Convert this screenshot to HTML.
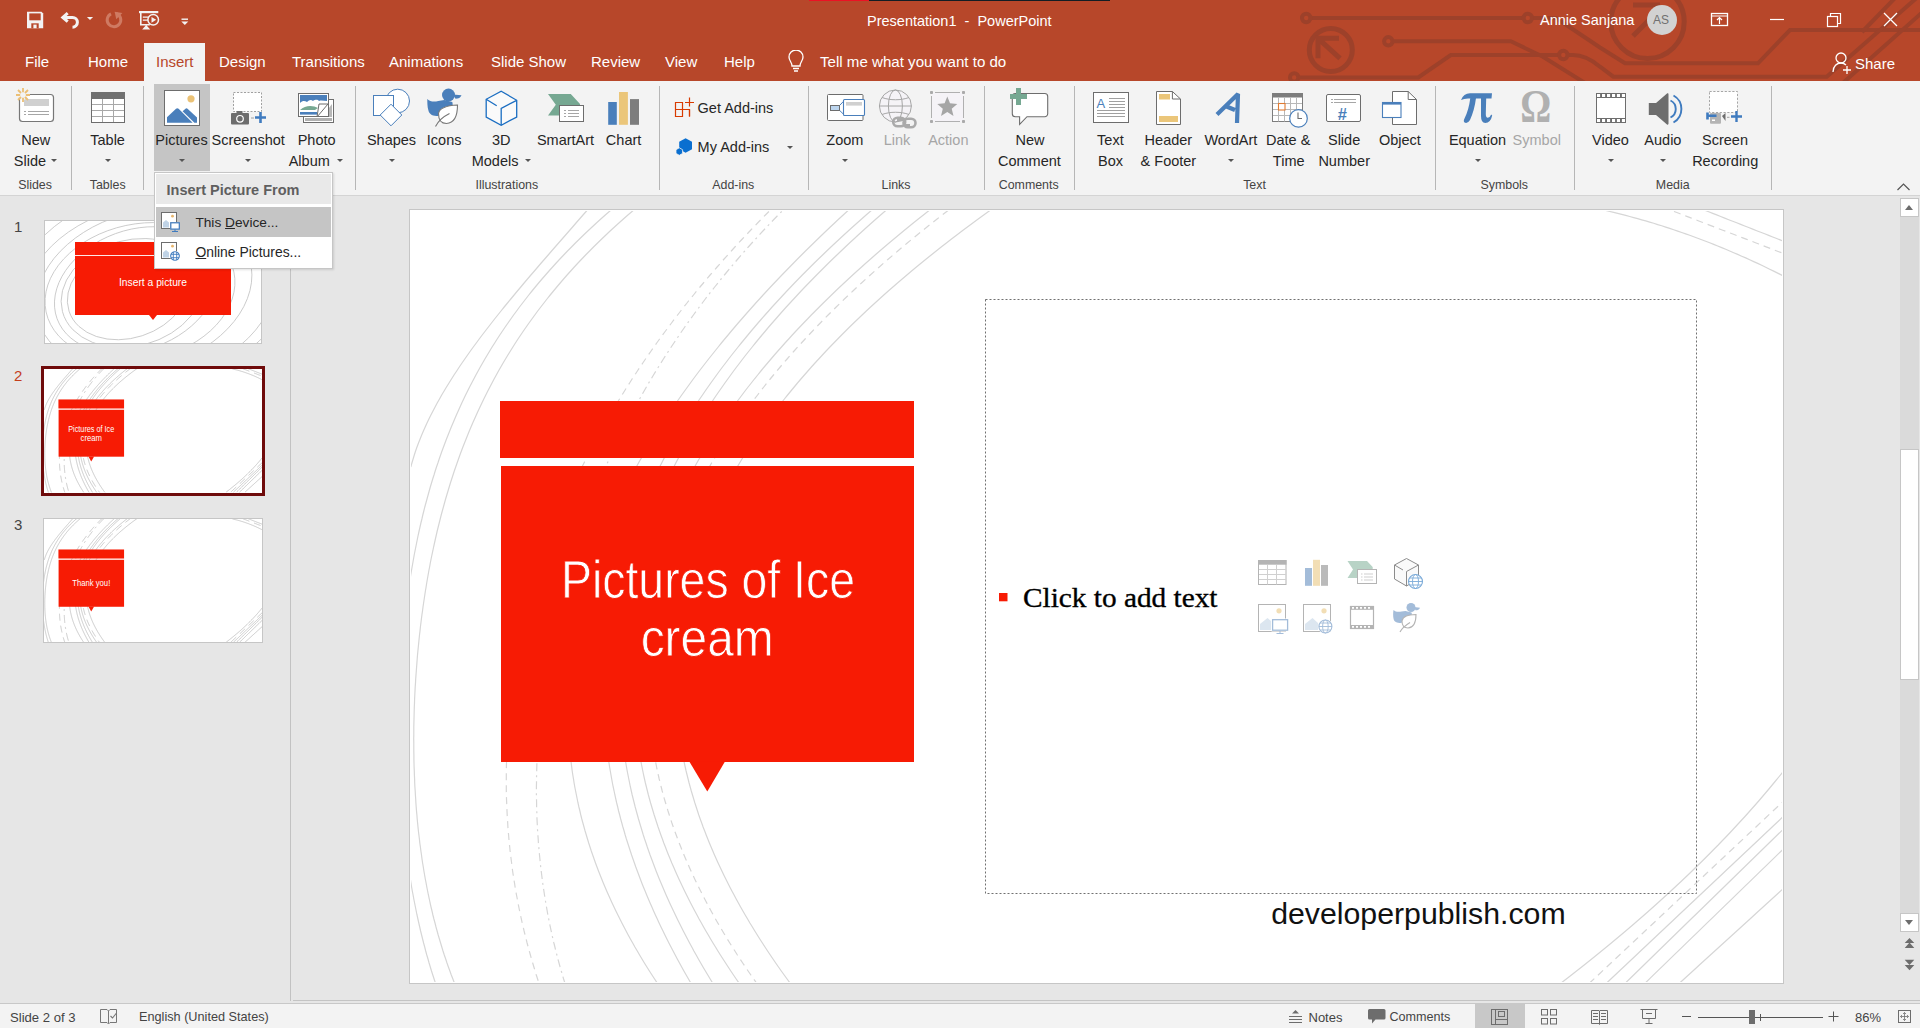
<!DOCTYPE html>
<html><head><meta charset="utf-8"><title>PowerPoint</title>
<style>
*{margin:0;padding:0;box-sizing:border-box}
html,body{width:1920px;height:1028px;overflow:hidden;background:#e6e6e6;font-family:"Liberation Sans",sans-serif}
.a{position:absolute}
.t{position:absolute;white-space:nowrap;line-height:1}
#title{left:0;top:0;width:1920px;height:81px;background:#b7472a}
.tab{color:#fff;font-size:15px;top:54px}
#ribbon{left:0;top:81px;width:1920px;height:114px;background:#f3f3f3}
.rl{font-size:14.5px;color:#262626;text-align:center}
.gl{font-size:12.4px;color:#444;top:179px}
.sep{position:absolute;top:86px;width:1px;height:104px;background:#b6b6b6}
.dd{position:absolute;width:0;height:0;border-left:3.5px solid transparent;border-right:3.5px solid transparent;border-top:3.8px solid #555;margin-left:0.5px}
</style></head><body>
<!-- TITLE BAR -->
<div id="title" class="a">
<svg class="a" style="left:0;top:0" width="1920" height="81" viewBox="0 0 1920 81">
<g fill="none" stroke="#9d412a" stroke-width="4">
<path d="M1310 18H1524M1532 18H1556L1600 47.5L1625 63.3H1758L1790 30H1920"/>
<circle cx="1306.2" cy="18" r="4.2"/><circle cx="1527.8" cy="18" r="4.2"/>
<circle cx="1330.8" cy="50" r="21.5" stroke-width="5"/>
<path d="M1339 38.3H1318V58.3M1318 38.3L1340 58.3" stroke-width="5"/>
<circle cx="1388.3" cy="41.3" r="4.2"/>
<path d="M1392.5 41.3H1510.8L1543 56.7L1585 83"/>
<circle cx="1294.2" cy="77.5" r="4.2"/>
<path d="M1298.4 77.5H1418.3L1450.8 55H1559.1M1567.5 55H1573Q1586 55 1600 66.7L1613.3 76.7H1826.7L1920 -5"/>
<circle cx="1563.3" cy="55" r="4.2"/>
<circle cx="1647.5" cy="21.7" r="36.7" stroke-width="5"/>
<path d="M1633 5H1660M1633 36L1660 9" stroke-width="5"/>
<path d="M1841.7 84L1925 10M1862 32L1897 -4"/>
</g>
</svg>
<!-- QAT -->
<svg class="a" style="left:0;top:0" width="200" height="40" viewBox="0 0 200 40">
<path d="M27 11.7h14.5l1.7 1.7v14.8h-16.2z" fill="#f3f3f3"/>
<rect x="29.3" y="13.4" width="11.4" height="6.9" fill="#b7472a"/>
<rect x="31.3" y="23.3" width="7.4" height="4.9" fill="#b7472a"/>
<rect x="33.4" y="24.6" width="3.2" height="3.6" fill="#f3f3f3"/>
<path d="M62.5 17.4H72.5A4.9 4.9 0 0 1 72.5 27.2" fill="none" stroke="#f3f3f3" stroke-width="3"/>
<path d="M67.7 13.2L62.8 17.4L67.7 21.7" fill="none" stroke="#f3f3f3" stroke-width="3" stroke-linejoin="miter"/>
<path d="M86.9 17.1h6.2l-3.1 2.9z" fill="#f3f3f3"/>
<path d="M111 13.8A6.8 6.8 0 1 0 116.5 13.6" fill="none" stroke="#cf7a62" stroke-width="3"/>
<path d="M114.6 11.8L122.4 13L116.3 19.2Z" fill="#cf7a62"/>
<rect x="139" y="11" width="19.3" height="2.2" fill="#f3f3f3"/>
<path d="M140.8 13v11.8h9" fill="none" stroke="#f3f3f3" stroke-width="1.6"/>
<path d="M142.8 17.2h6.5M142.8 20.2h5.5" stroke="#f3f3f3" stroke-width="1.3"/>
<circle cx="153.2" cy="19.8" r="5.3" fill="#b7472a" stroke="#f3f3f3" stroke-width="1.5"/>
<path d="M151.5 16.9L156.2 19.8L151.5 22.7Z" fill="#f3f3f3"/>
<path d="M146.2 25v1.5M143.5 29L146.2 26L148.9 29Z" stroke="#f3f3f3" fill="#f3f3f3" stroke-width="1.2"/>
<rect x="181.5" y="18.5" width="6.5" height="1.4" fill="#f3f3f3"/><path d="M181.3 21.5h7l-3.5 3.6z" fill="#f3f3f3"/>
</svg>
<div class="t" style="left:867px;top:13.5px;font-size:14.5px;color:#fff">Presentation1&nbsp; -&nbsp; PowerPoint</div>
<div class="a" style="left:809px;top:0;width:60px;height:1px;background:#ec1124"></div>
<div class="a" style="left:869px;top:0;width:241px;height:1px;background:#121d24"></div>
<div class="t" style="left:1540px;top:12.5px;font-size:14.5px;color:#fff">Annie Sanjana</div>
<div class="a" style="left:1647px;top:5px;width:30px;height:30px;border-radius:50%;background:#d2d2d2"></div>
<div class="t" style="left:1653px;top:14px;font-size:12px;color:#707070">AS</div>
<svg class="a" style="left:1700px;top:5px" width="220" height="30" viewBox="0 0 220 30">
<rect x="11.5" y="8.5" width="16" height="12" fill="none" stroke="#fff" stroke-width="1.3"/>
<path d="M11.5 11 h16" stroke="#fff" stroke-width="1"/><path d="M19.5 19 v-6 M17 15 l2.5 -2.5 l2.5 2.5" stroke="#fff" fill="none" stroke-width="1.2"/>
<path d="M70 14.5 h14" stroke="#fff" stroke-width="1.2"/>
<rect x="127.5" y="11.5" width="10" height="10" fill="none" stroke="#fff" stroke-width="1.2"/>
<path d="M130.5 11.5 v-3 h10 v10 h-3" fill="none" stroke="#fff" stroke-width="1.2"/>
<path d="M184 8 L197 21 M197 8 L184 21" stroke="#fff" stroke-width="1.3"/>
</svg>
<div class="t tab" style="left:25px">File</div>
<div class="t tab" style="left:88px">Home</div>
<div class="a" style="left:144px;top:43px;width:61px;height:38px;background:#f3f3f3"></div>
<div class="t tab" style="left:156px;color:#b7472a">Insert</div>
<div class="t tab" style="left:219px">Design</div>
<div class="t tab" style="left:292px">Transitions</div>
<div class="t tab" style="left:389px">Animations</div>
<div class="t tab" style="left:491px">Slide Show</div>
<div class="t tab" style="left:591px">Review</div>
<div class="t tab" style="left:665px">View</div>
<div class="t tab" style="left:724px">Help</div>
<svg class="a" style="left:786px;top:50px" width="20" height="24" viewBox="0 0 20 24">
<path d="M6 16 C6 12 3 11 3 7 A7 7 0 0 1 17 7 C17 11 14 12 14 16 Z" fill="none" stroke="#fff" stroke-width="1.3"/>
<path d="M7 18.5 h6 M8 21 h4" stroke="#fff" stroke-width="1.3"/>
</svg>
<div class="t tab" style="left:820px;font-size:15.1px;top:53.5px">Tell me what you want to do</div>
<svg class="a" style="left:1830px;top:51px" width="24" height="24" viewBox="0 0 24 24">
<circle cx="11" cy="7" r="5" fill="none" stroke="#fff" stroke-width="1.3"/>
<path d="M3 21 C3 15 7 12 11 12 C13 12 15 13 16 14" fill="none" stroke="#fff" stroke-width="1.3"/>
<path d="M17 15 v8 M13 19 h8" stroke="#fff" stroke-width="1.3"/>
</svg>
<div class="t tab" style="left:1855px;top:56px">Share</div>
</div>
<!-- RIBBON -->
<div id="ribbon" class="a"></div>
<!--RIBBON_START-->
<div class="a" style="left:154px;top:84px;width:56px;height:87px;background:#c5c5c5"></div>
<svg class="a" style="left:0;top:81px" width="1920" height="114" viewBox="0 81 1920 114">
<!-- New Slide -->
<rect x="19.5" y="94.5" width="34" height="27" rx="3" fill="#fff" stroke="#777" stroke-width="1.2"/>
<rect x="24" y="99" width="25" height="7" fill="#d0d0d0"/>
<path d="M24 111.5h2M28 111.5h21M24 114.5h2M28 114.5h21" stroke="#a6a6a6" stroke-width="1"/>
<circle cx="23" cy="95" r="5" fill="#f3f3f3"/>
<g stroke="#ebbf75" stroke-width="1.8"><path d="M23 88v4.2M23 97.8v4.2M16 95h4.2M25.8 95h4.2M18 90l3 3M25 97l3 3M28 90l-3 3M21 97l-3 3"/></g>
<!-- Table -->
<rect x="91.5" y="92.5" width="33" height="30" fill="#fff" stroke="#6d6d6d" stroke-width="1"/>
<rect x="91" y="92" width="34" height="7" fill="#707070"/>
<path d="M102.5 99v23M113.5 99v23M92 104.5h32M92 110.5h32M92 116.5h32" stroke="#a8a8a8" stroke-width="1"/>
<!-- Pictures -->
<rect x="164.5" y="90.5" width="35" height="35" fill="#fff" stroke="#6d6d6d" stroke-width="1"/>
<circle cx="191" cy="98.8" r="3.6" fill="#ebc276"/>
<path d="M167 122.8V117.2L176 108.8Q177.3 107.6 178.6 108.8L192.6 122.8Z" fill="#4a7fbb"/>
<path d="M182.6 111.2L185.2 108.9Q186.5 107.8 187.8 108.9L197 117.6V122.8H194.4Z" fill="#4a7fbb"/>
<!-- Screenshot -->
<rect x="233.5" y="92.5" width="28" height="19" fill="#fff" stroke="#a0a0a0" stroke-width="1" stroke-dasharray="2 1.5"/>
<rect x="231" y="113" width="18" height="11.6" rx="1" fill="#6d6d6d"/>
<rect x="236.5" y="111" width="6" height="3" fill="#6d6d6d"/>
<circle cx="240" cy="118.8" r="3.3" fill="none" stroke="#fff" stroke-width="1.2"/>
<path d="M251 118h3" stroke="#a0a0a0"/>
<path d="M260.5 112v11M255 117.5h11" stroke="#3f7bbf" stroke-width="2.6"/>
<!-- Photo Album -->
<rect x="303.5" y="99.5" width="30" height="23" fill="#fff" stroke="#6d6d6d"/>
<rect x="305" y="118" width="27" height="3" fill="#b0b0b0"/>
<path d="M322 117L332 104V117Z" fill="#b8b8b8"/>
<rect x="298.5" y="93.5" width="30" height="23" fill="#fff" stroke="#6d6d6d"/>
<rect x="300" y="95" width="27" height="9" fill="#4a7fbb"/>
<path d="M300 103c3-3 5-2 7-1c2-2 4-3 6-1c3-2 5-1 6 0c2-1 5 0 8 0v6H300Z" fill="#fff"/>
<path d="M300 110c5-5 13-5 18-2l-3 2H300Z" fill="#76a892"/>
<rect x="300" y="112" width="17" height="2.6" fill="#4a7fbb"/>
<path d="M317 117L328 104H319Z" fill="#fff" stroke="#6d6d6d" stroke-width="1"/>
<!-- Shapes -->
<circle cx="397.7" cy="101" r="11.8" fill="#fff" stroke="#4a7fbb" stroke-width="1"/>
<rect x="373.5" y="95.5" width="20" height="20" fill="#fff" stroke="#4a7fbb" stroke-width="1"/>
<path d="M391 104.2L401.8 115L391 125.8L380.2 115Z" fill="#fff" stroke="#4a7fbb" stroke-width="1"/>
<!-- Icons -->
<circle cx="448.5" cy="95" r="6.5" fill="#4a7fbb"/>
<path d="M453 94.5l8.5 0.8c-1 2.5-3 3.5-6 3.5Z" fill="#4a7fbb"/>
<path d="M427.3 99c3 3 7 3 11 2l6-1l8 2c1 3 0 6-2 8l-12 6c-5 0-9-1-10-6c-1-3-1-8-1-11Z" fill="#4a7fbb"/>
<path d="M438.5 113.5c1-6 8-8 19-8.5c0 10-3 18-11 18.5c-4 0-8-2-8-10Z" fill="#fff" stroke="#777" stroke-width="1.1"/>
<path d="M435.5 126.5c3-6 8-10 14-13" fill="none" stroke="#777" stroke-width="1.1"/>
<!-- 3D Models -->
<path d="M501.2 91.2L516.7 100.3V117L501.2 125.2L486.2 117V99.3Z" fill="#fafafa" stroke="#1b6ec2" stroke-width="1.3"/>
<path d="M516.7 100.3L501.2 108.3V125.2M486.2 99.3L496.7 105.8" fill="none" stroke="#1b6ec2" stroke-width="1.3"/>
<!-- SmartArt -->
<path d="M548 94.1H570.8L580 104V115.6H558L548 115.6L555.8 104.8Z" fill="#76a892"/>
<rect x="559.5" y="105.5" width="24" height="16" fill="#fff" stroke="#6d6d6d" stroke-width="1"/>
<path d="M564 110.5h2M568 110.5h11M564 113.5h2M568 113.5h11M564 116.5h2M568 116.5h11" stroke="#a6a6a6" stroke-width="1"/>
<!-- Chart -->
<rect x="608.2" y="102" width="8.6" height="22.8" fill="#4a7fbb"/>
<rect x="619" y="92" width="8.9" height="32.8" fill="#ebc67a"/>
<rect x="630" y="99.1" width="9" height="25.7" fill="#7d7d7d"/>
<!-- Get Add-ins -->
<path d="M675.5 102.5H682.5V116.5H675.5ZM675.5 109.5H689.5V116.5M682.5 109.5V116.5" fill="none" stroke="#d83b01" stroke-width="1.2"/>
<path d="M689.5 109.5V116.5" stroke="#d83b01" stroke-width="1.2"/>
<path d="M689.5 97.5V106.5M685 102.5H694" stroke="#d83b01" stroke-width="1.2"/>
<!-- My Add-ins -->
<path d="M685.6 138.2L692 141.8V149.2L685.6 152.8L679.2 149.2V141.8Z" fill="#0a6fd0"/>
<path d="M679.3 147.8L682.6 149.7V153.4L679.3 155.3L676 153.4V149.7Z" fill="#0a6fd0" stroke="#f3f3f3" stroke-width="0.8"/>
<!-- Zoom -->
<rect x="827.5" y="94.5" width="35.5" height="26" rx="1" fill="#fff" stroke="#6d6d6d"/>
<rect x="830.5" y="105.5" width="9" height="5" fill="#bcd5ee" stroke="#6d6d6d"/>
<path d="M839.8 105.3L843.3 101.5M839.8 110.6L843.3 114" stroke="#4a7fbb"/>
<rect x="843.5" y="99.5" width="21" height="16" rx="1" fill="#fff" stroke="#4a7fbb" stroke-width="1.1"/>
<rect x="846" y="102" width="16" height="3.6" fill="#d0d0d0"/>
<!-- Link -->
<circle cx="895.4" cy="106" r="16" fill="#f5f3f7" stroke="#a6a6a6"/>
<ellipse cx="895.4" cy="106" rx="7" ry="16" fill="none" stroke="#a6a6a6"/>
<path d="M879.4 106h32M882 97.5c8 3 19 3 27 0M882 114.5c8-3 19-3 27 0" fill="none" stroke="#a6a6a6"/>
<path d="M897 119.5h6M904 125.5h6" stroke="#aaa" stroke-width="3"/>
<rect x="893.2" y="117.7" width="12" height="8.6" rx="4.3" fill="none" stroke="#aaa" stroke-width="2.6"/>
<rect x="903.5" y="118.7" width="12" height="8.6" rx="4.3" fill="none" stroke="#aaa" stroke-width="2.6"/>
<!-- Action -->
<rect x="931.5" y="92.5" width="32" height="29" fill="#f5f3f7"/>
<path d="M935 92.5h25M935 121.5h25M931.5 96v22M963.5 96v22" stroke="#b0b0b0" stroke-width="1"/>
<path d="M930.5 91.5h2v2h-2zM962.5 91.5h2v2h-2zM930.5 120.5h2v2h-2zM962.5 120.5h2v2h-2z" fill="#aaa" stroke="#aaa"/>
<path d="M947.3 96.5L950 103.3L957.3 104L951.7 108.7L953.5 116L947.3 112L941 116L942.8 108.7L937.3 104L944.6 103.3Z" fill="#a6a6a6"/>
<!-- New Comment -->
<path d="M1015.3 93.5H1044.7A3 3 0 0 1 1047.7 96.5V113.7A3 3 0 0 1 1044.7 116.7H1027L1019.6 124.3V116.7H1015.3A3 3 0 0 1 1012.3 113.7V96.5A3 3 0 0 1 1015.3 93.5Z" fill="#fff" stroke="#6d6d6d" stroke-width="1.1"/>
<path d="M1018.5 88v17M1010 96.5h17" stroke="#76a892" stroke-width="5"/>
<!-- Text Box -->
<rect x="1093.5" y="92.5" width="35" height="30" fill="#fff" stroke="#6d6d6d"/>
<text x="1096.5" y="108.3" font-family="Liberation Sans" font-size="13" fill="#4a7fbb">A</text>
<path d="M1109 98.5h16M1109 101.5h16M1109 104.5h16M1109 107.5h16M1097 110.5h28M1097 113.5h28M1097 116.5h28" stroke="#a0a0a0"/>
<!-- Header & Footer -->
<path d="M1156.5 91.5H1172.4L1180.5 99V124.5H1156.5Z" fill="#fff" stroke="#6d6d6d"/>
<path d="M1172.4 91.5V99H1180.5" fill="none" stroke="#6d6d6d"/>
<rect x="1159" y="94" width="11" height="5.5" fill="#ebc67a"/>
<rect x="1159" y="116" width="19" height="6" fill="#ebc67a"/>
<!-- WordArt -->
<path d="M1217 114.5L1238 94L1237 123M1226.5 106.5L1235 110" fill="none" stroke="#4a7fbb" stroke-width="4.2" stroke-linejoin="bevel"/>
<!-- Date & Time -->
<rect x="1272.5" y="93.5" width="30" height="28" fill="#fff" stroke="#7d7d7d"/>
<rect x="1272" y="93" width="31" height="4.5" fill="#7d7d7d"/>
<path d="M1278.5 97.5v24M1284.5 97.5v24M1290.5 97.5v24M1296.5 97.5v24M1273 103.5h29M1273 109.5h29M1273 115.5h29" stroke="#b8b8b8"/>
<rect x="1278.5" y="103.5" width="6.5" height="6.5" fill="#fff" stroke="#e07b32" stroke-width="1.1"/>
<circle cx="1298.5" cy="118.4" r="8.8" fill="#fff" stroke="#4a7fbb" stroke-width="1.2"/>
<path d="M1298 112.5v6h4" fill="none" stroke="#6d6d6d" stroke-width="1.1"/>
<!-- Slide Number -->
<rect x="1326.5" y="94.5" width="34" height="27" rx="1.5" fill="#fff" stroke="#6d6d6d"/>
<path d="M1331 99.5h2M1334 99.5h22M1331 102.5h2M1334 102.5h22" stroke="#a6a6a6"/>
<text x="1337.5" y="119.5" font-family="Liberation Sans" font-style="italic" font-weight="bold" font-size="16.5" fill="#4a7fbb">#</text>
<!-- Object -->
<path d="M1392.5 91.5H1408.2L1416.5 99.5V124.5H1392.5Z" fill="#fff" stroke="#6d6d6d"/>
<path d="M1408.2 91.5V99.5H1416.5" fill="none" stroke="#6d6d6d"/>
<rect x="1382.5" y="102.5" width="18.5" height="15" fill="#fff" stroke="#4a7fbb" stroke-width="1.1"/>
<rect x="1382" y="102" width="19" height="2.6" fill="#4a7fbb"/>
<!-- Equation -->
<path d="M1461 100Q1463.5 93.5 1470 93.3L1492 93.3L1491.5 98.4L1468 98.4Q1464 98.4 1461 100Z" fill="#4a7fbb"/><path d="M1470.3 98L1476 98Q1474.5 110 1470 120Q1468 123.5 1465.2 122.8Q1462.8 121.8 1464.5 118.5Q1468.8 110 1470.3 98Z" fill="#4a7fbb"/><path d="M1481 98L1486.2 98L1485.8 114Q1485.8 117.8 1487.8 117.8Q1489.8 117.8 1491.2 114.5L1492.2 115.5Q1490.5 123 1485.3 123Q1481 123 1481 116Z" fill="#4a7fbb"/>
<!-- Symbol -->
<text x="1520.3" y="122" font-family="Liberation Serif" font-weight="bold" font-size="47" fill="#b0b0b0" textLength="31" lengthAdjust="spacingAndGlyphs">Ω</text>
<!-- Video -->
<rect x="1596.5" y="93.5" width="29" height="29" fill="#fff" stroke="#6d6d6d"/>
<rect x="1596" y="93" width="30" height="5" fill="#6d6d6d"/>
<rect x="1596" y="118" width="30" height="5" fill="#6d6d6d"/>
<path d="M1597 94h3.1v3h-3.1zM1602 94h3.1v3h-3.1zM1607 94h3.1v3h-3.1zM1612 94h3.1v3h-3.1zM1616.9 94h3.1v3h-3.1zM1621.9 94h3.1v3h-3.1zM1597 119h3.1v3h-3.1zM1602 119h3.1v3h-3.1zM1607 119h3.1v3h-3.1zM1612 119h3.1v3h-3.1zM1616.9 119h3.1v3h-3.1zM1621.9 119h3.1v3h-3.1z" fill="#fff"/>
<!-- Audio -->
<path d="M1648.8 103H1656L1667 93.5C1668 93 1668.5 93.5 1668.5 94.5V123.5C1668.5 124.5 1668 125 1667 124.5L1656 115H1648.8Z" fill="#6d6d6d"/>
<path d="M1670.5 100.5A9.5 9.5 0 0 1 1670.5 117.5M1673.5 95.5A15.5 15.5 0 0 1 1673.5 122.5" fill="none" stroke="#3f7bbf" stroke-width="1.9"/>
<!-- Screen Recording -->
<rect x="1709.5" y="91.5" width="28" height="21" fill="#fff" stroke="#a6a6a6" stroke-dasharray="2.2 1.6"/>
<rect x="1710" y="113" width="11" height="10.8" rx="1" fill="#b4b4b4"/>
<rect x="1712" y="119.5" width="3" height="1.5" fill="#fff"/>
<path d="M1707.5 112.5v7M1707 115.7h9.5" stroke="#3f7bbf" stroke-width="2.6"/>
<path d="M1722 116l3.5-3v8z" fill="#6d6d6d"/>
<path d="M1727 117.3h2.5" stroke="#a0a0a0"/>
<path d="M1736.5 111v11M1731 116.5h11" stroke="#3f7bbf" stroke-width="2.4"/>
<!-- collapse chevron -->
<path d="M1897.5 190L1903.5 184L1909.5 190" fill="none" stroke="#555" stroke-width="1.2"/>
</svg>

<div class="t rl" style="left:-34.2px;top:133.4px;width:140px">New</div>
<div class="t rl" style="left:37.6px;top:133.4px;width:140px">Table</div>
<div class="t rl" style="left:111.5px;top:133.4px;width:140px">Pictures</div>
<div class="t rl" style="left:178.2px;top:133.4px;width:140px">Screenshot</div>
<div class="t rl" style="left:246.6px;top:133.4px;width:140px">Photo</div>
<div class="t rl" style="left:321.5px;top:133.4px;width:140px">Shapes</div>
<div class="t rl" style="left:374.2px;top:133.4px;width:140px">Icons</div>
<div class="t rl" style="left:431.2px;top:133.4px;width:140px">3D</div>
<div class="t rl" style="left:495.5px;top:133.4px;width:140px">SmartArt</div>
<div class="t rl" style="left:553.6px;top:133.4px;width:140px">Chart</div>
<div class="t rl" style="left:774.9px;top:133.4px;width:140px">Zoom</div>
<div class="t rl" style="left:827.0px;top:133.4px;width:140px;color:#a6a6a6">Link</div>
<div class="t rl" style="left:878.3px;top:133.4px;width:140px;color:#a6a6a6">Action</div>
<div class="t rl" style="left:960.1px;top:133.4px;width:140px">New</div>
<div class="t rl" style="left:959.4px;top:153.5px;width:140px">Comment</div>
<div class="t rl" style="left:1040.4px;top:133.4px;width:140px">Text</div>
<div class="t rl" style="left:1040.5px;top:153.5px;width:140px">Box</div>
<div class="t rl" style="left:1098.4px;top:133.4px;width:140px">Header</div>
<div class="t rl" style="left:1098.4px;top:153.5px;width:140px">&amp; Footer</div>
<div class="t rl" style="left:1160.9px;top:133.4px;width:140px">WordArt</div>
<div class="t rl" style="left:1218.2px;top:133.4px;width:140px">Date &amp;</div>
<div class="t rl" style="left:1218.7px;top:153.5px;width:140px">Time</div>
<div class="t rl" style="left:1274.1px;top:133.4px;width:140px">Slide</div>
<div class="t rl" style="left:1274.2px;top:153.5px;width:140px">Number</div>
<div class="t rl" style="left:1329.9px;top:133.4px;width:140px">Object</div>
<div class="t rl" style="left:1407.5px;top:133.4px;width:140px">Equation</div>
<div class="t rl" style="left:1466.8px;top:133.4px;width:140px;color:#a6a6a6">Symbol</div>
<div class="t rl" style="left:1540.5px;top:133.4px;width:140px">Video</div>
<div class="t rl" style="left:1592.9px;top:133.4px;width:140px">Audio</div>
<div class="t rl" style="left:1655.0px;top:133.4px;width:140px">Screen</div>
<div class="t rl" style="left:1655.2px;top:153.5px;width:140px">Recording</div>
<div class="t rl" style="left:13.8px;top:153.5px;text-align:left">Slide</div>
<div class="dd" style="left:50.5px;top:159px"></div>
<div class="t rl" style="left:288.7px;top:153.5px;text-align:left">Album</div>
<div class="dd" style="left:336.5px;top:159px"></div>
<div class="t rl" style="left:471.7px;top:153.5px;text-align:left">Models</div>
<div class="dd" style="left:524.5px;top:159px"></div>
<div class="dd" style="left:104.3px;top:159px"></div>
<div class="dd" style="left:178.0px;top:159px"></div>
<div class="dd" style="left:244.7px;top:159px"></div>
<div class="dd" style="left:388.5px;top:159px"></div>
<div class="dd" style="left:841.5px;top:159px"></div>
<div class="dd" style="left:1227.5px;top:159px"></div>
<div class="dd" style="left:1474.2px;top:159px"></div>
<div class="dd" style="left:1607.5px;top:159px"></div>
<div class="dd" style="left:1659.3px;top:159px"></div>
<div class="t gl" style="left:-35.0px;width:140px;text-align:center;top:179.2px">Slides</div>
<div class="t gl" style="left:37.7px;width:140px;text-align:center;top:179.2px">Tables</div>
<div class="t gl" style="left:436.8px;width:140px;text-align:center;top:179.2px">Illustrations</div>
<div class="t gl" style="left:663.3px;width:140px;text-align:center;top:179.2px">Add-ins</div>
<div class="t gl" style="left:826.0px;width:140px;text-align:center;top:179.2px">Links</div>
<div class="t gl" style="left:958.7px;width:140px;text-align:center;top:179.2px">Comments</div>
<div class="t gl" style="left:1184.5px;width:140px;text-align:center;top:179.2px">Text</div>
<div class="t gl" style="left:1434.3px;width:140px;text-align:center;top:179.2px">Symbols</div>
<div class="t gl" style="left:1602.7px;width:140px;text-align:center;top:179.2px">Media</div>
<div class="sep" style="left:71px"></div>
<div class="sep" style="left:143px"></div>
<div class="sep" style="left:355px"></div>
<div class="sep" style="left:659px"></div>
<div class="sep" style="left:808px"></div>
<div class="sep" style="left:984px"></div>
<div class="sep" style="left:1074px"></div>
<div class="sep" style="left:1435px"></div>
<div class="sep" style="left:1574px"></div>
<div class="sep" style="left:1771px"></div>
<div class="t rl" style="left:697.6px;top:101.4px;text-align:left">Get Add-ins</div>
<div class="t rl" style="left:697.6px;top:140.4px;text-align:left">My Add-ins</div>
<div class="dd" style="left:786.5px;top:146px"></div>
<!--RIBBON_END-->
<div class="a" style="left:0;top:195px;width:1920px;height:1px;background:#d4d4d4"></div>
<!-- WORKSPACE -->
<div id="work" class="a" style="left:0;top:196px;width:1920px;height:804px;background:#e6e6e6"></div>
<!--WORK_START-->
<div class="a" style="left:290px;top:196px;width:1px;height:805px;background:#c2c2c2"></div>
<div class="a" style="left:293px;top:1000px;width:1627px;height:1px;background:#c4c4c4"></div>
<svg class="a" style="left:0;top:0;width:0;height:0" width="0" height="0">
<defs>
<g id="arcs"><g fill="none">
<path vector-effect="non-scaling-stroke" d="M593.4 203.0 L589.9 207.0 L586.5 211.0 L583.0 215.0 L579.5 219.0 L576.0 223.0 L572.6 227.0 L569.1 231.0 L565.6 235.0 L562.1 239.0 L558.6 243.0 L555.1 247.0 L551.6 251.0 L548.2 255.0 L544.7 259.0 L541.2 263.0 L537.8 267.0 L534.4 271.0 L530.9 275.0 L527.5 279.0 L524.1 283.0 L520.8 287.0 L517.4 291.0 L514.1 295.0 L510.8 299.0 L507.5 303.0 L504.2 307.0 L501.0 311.0 L497.8 315.0 L494.6 319.0 L491.5 323.0 L488.4 327.0 L485.3 331.0 L482.2 335.0 L479.2 339.0 L476.3 343.0 L473.3 347.0 L470.4 351.0 L467.6 355.0 L464.8 359.0 L462.0 363.0 L459.3 367.0 L456.7 371.0 L454.0 375.0 L451.5 379.0 L449.0 383.0 L446.5 387.0 L444.1 391.0 L441.7 395.0 L439.5 399.0 L437.2 403.0 L435.1 407.0 L433.0 411.0 L430.9 415.0 L428.9 419.0 L427.0 423.0 L425.2 427.0 L423.4 431.0 L421.7 435.0 L420.1 439.0 L418.5 443.0 L417.0 447.0 L415.6 451.0 L414.3 455.0 L413.1 459.0 L411.9 463.0 L410.8 467.0"/>
<path vector-effect="non-scaling-stroke" d="M619.3 203.0 L614.5 207.0 L609.9 211.0 L605.3 215.0 L600.8 219.0 L596.4 223.0 L592.1 227.0 L587.8 231.0 L583.6 235.0 L579.5 239.0 L575.4 243.0 L571.5 247.0 L567.5 251.0 L563.7 255.0 L559.9 259.0 L556.2 263.0 L552.6 267.0 L549.0 271.0 L545.5 275.0 L542.0 279.0 L538.6 283.0 L535.3 287.0 L532.0 291.0 L528.8 295.0 L525.7 299.0 L522.6 303.0 L519.5 307.0 L516.6 311.0 L513.6 315.0 L510.8 319.0 L508.0 323.0 L505.2 327.0 L502.5 331.0 L499.8 335.0 L497.2 339.0 L494.7 343.0 L492.1 347.0 L489.7 351.0 L487.3 355.0 L484.9 359.0 L482.6 363.0 L480.3 367.0 L478.1 371.0 L475.9 375.0 L473.8 379.0 L471.7 383.0 L469.6 387.0 L467.6 391.0 L465.6 395.0 L463.7 399.0 L461.8 403.0 L460.0 407.0 L458.2 411.0 L456.4 415.0 L454.7 419.0 L453.0 423.0 L451.3 427.0 L449.7 431.0 L448.1 435.0 L446.5 439.0 L445.0 443.0 L443.5 447.0 L442.0 451.0 L440.6 455.0 L439.2 459.0 L437.9 463.0 L436.5 467.0 L435.2 471.0 L434.0 475.0 L432.7 479.0 L431.5 483.0 L430.3 487.0 L429.2 491.0 L428.1 495.0 L427.0 499.0 L425.9 503.0 L424.8 507.0 L423.8 511.0 L422.8 515.0 L421.9 519.0 L420.9 523.0 L420.0 527.0 L419.1 531.0 L418.2 535.0 L417.4 539.0 L416.6 543.0 L415.8 547.0 L415.0 551.0 L414.2 555.0 L413.5 559.0 L412.8 563.0 L412.1 567.0 L411.4 571.0 L410.7 575.0 L410.1 579.0 L409.5 583.0 L408.9 587.0 L408.3 591.0 L407.8 595.0 L407.2 599.0 L406.7 603.0 L406.2 607.0 L405.7 611.0 L405.3 615.0 L404.8 619.0 L404.4 623.0 L404.0 627.0 L403.6 631.0 L403.2 635.0 L402.9 639.0 L402.5 643.0 L402.2 647.0 L401.9 651.0 L401.6 655.0 L401.3 659.0 L401.0 663.0 L400.8 667.0 L400.6 671.0 L400.3 675.0 L400.1 679.0 L400.0 683.0 L399.8 687.0 L399.6 691.0 L399.5 695.0 L399.4 699.0 L399.3 703.0 L399.2 707.0 L399.1 711.0 L399.0 715.0 L399.0 719.0 L399.0 723.0 L398.9 727.0 L398.9 731.0 L399.0 735.0 L399.0 739.0 L399.0 743.0 L399.1 747.0 L399.2 751.0 L399.2 755.0 L399.4 759.0 L399.5 763.0 L399.6 767.0 L399.8 771.0 L399.9 775.0 L400.1 779.0 L400.3 783.0 L400.5 787.0 L400.8 791.0 L401.0 795.0 L401.3 799.0 L401.5 803.0 L401.8 807.0 L402.2 811.0 L402.5 815.0 L402.8 819.0 L403.2 823.0 L403.6 827.0 L404.0 831.0 L404.4 835.0 L404.9 839.0 L405.3 843.0 L405.8 847.0 L406.3 851.0 L406.8 855.0 L407.3 859.0 L407.9 863.0 L408.5 867.0 L409.1 871.0 L409.7 875.0 L410.3 879.0 L411.0 883.0 L411.6 887.0 L412.3 891.0 L413.1 895.0 L413.8 899.0 L414.6 903.0 L415.4 907.0 L416.2 911.0 L417.0 915.0 L417.9 919.0 L418.8 923.0 L419.7 927.0 L420.6 931.0 L421.6 935.0 L422.6 939.0 L423.6 943.0 L424.7 947.0 L425.7 951.0 L426.8 955.0 L428.0 959.0 L429.1 963.0 L430.3 967.0 L431.5 971.0 L432.8 975.0 L434.1 979.0 L435.4 983.0 L436.7 987.0"/>
<path vector-effect="non-scaling-stroke" d="M642.1 203.0 L637.3 207.0 L632.6 211.0 L627.9 215.0 L623.4 219.0 L618.9 223.0 L614.5 227.0 L610.1 231.0 L605.9 235.0 L601.7 239.0 L597.6 243.0 L593.5 247.0 L589.6 251.0 L585.6 255.0 L581.8 259.0 L578.0 263.0 L574.3 267.0 L570.7 271.0 L567.1 275.0 L563.6 279.0 L560.2 283.0 L556.8 287.0 L553.5 291.0 L550.2 295.0 L547.0 299.0 L543.9 303.0 L540.8 307.0 L537.7 311.0 L534.8 315.0 L531.9 319.0 L529.0 323.0 L526.2 327.0 L523.4 331.0 L520.7 335.0 L518.0 339.0 L515.4 343.0 L512.9 347.0 L510.4 351.0 L507.9 355.0 L505.5 359.0 L503.1 363.0 L500.8 367.0 L498.5 371.0 L496.3 375.0 L494.1 379.0 L492.0 383.0 L489.9 387.0 L487.8 391.0 L485.8 395.0 L483.8 399.0 L481.9 403.0 L480.0 407.0 L478.1 411.0 L476.3 415.0 L474.5 419.0 L472.7 423.0 L471.0 427.0 L469.3 431.0 L467.7 435.0 L466.1 439.0 L464.5 443.0 L462.9 447.0 L461.4 451.0 L459.9 455.0 L458.5 459.0 L457.1 463.0 L455.7 467.0 L454.3 471.0 L453.0 475.0 L451.7 479.0 L450.4 483.0 L449.2 487.0 L448.0 491.0 L446.8 495.0 L445.6 499.0 L444.5 503.0 L443.4 507.0 L442.3 511.0 L441.2 515.0 L440.2 519.0 L439.2 523.0 L438.2 527.0 L437.2 531.0 L436.3 535.0 L435.4 539.0 L434.5 543.0 L433.6 547.0 L432.8 551.0 L431.9 555.0 L431.1 559.0 L430.3 563.0 L429.6 567.0 L428.8 571.0 L428.1 575.0 L427.4 579.0 L426.7 583.0 L426.1 587.0 L425.4 591.0 L424.8 595.0 L424.2 599.0 L423.6 603.0 L423.0 607.0 L422.5 611.0 L421.9 615.0 L421.4 619.0 L420.9 623.0 L420.4 627.0 L420.0 631.0 L419.5 635.0 L419.1 639.0 L418.7 643.0 L418.3 647.0 L417.9 651.0 L417.5 655.0 L417.2 659.0 L416.9 663.0 L416.6 667.0 L416.3 671.0 L416.0 675.0 L415.7 679.0 L415.5 683.0 L415.2 687.0 L415.0 691.0 L414.8 695.0 L414.6 699.0 L414.5 703.0 L414.3 707.0 L414.2 711.0 L414.1 715.0 L414.0 719.0 L413.9 723.0 L413.8 727.0 L413.8 731.0 L413.8 735.0 L413.7 739.0 L413.8 743.0 L413.8 747.0 L413.8 751.0 L413.9 755.0 L413.9 759.0 L414.0 763.0 L414.1 767.0 L414.3 771.0 L414.4 775.0 L414.6 779.0 L414.7 783.0 L414.9 787.0 L415.2 791.0 L415.4 795.0 L415.7 799.0 L415.9 803.0 L416.2 807.0 L416.5 811.0 L416.9 815.0 L417.2 819.0 L417.6 823.0 L418.0 827.0 L418.4 831.0 L418.9 835.0 L419.4 839.0 L419.8 843.0 L420.4 847.0 L420.9 851.0 L421.5 855.0 L422.0 859.0 L422.6 863.0 L423.3 867.0 L423.9 871.0 L424.6 875.0 L425.3 879.0 L426.1 883.0 L426.8 887.0 L427.6 891.0 L428.4 895.0 L429.3 899.0 L430.1 903.0 L431.0 907.0 L432.0 911.0 L432.9 915.0 L433.9 919.0 L435.0 923.0 L436.0 927.0 L437.1 931.0 L438.2 935.0 L439.4 939.0 L440.6 943.0 L441.8 947.0 L443.0 951.0 L444.3 955.0 L445.7 959.0 L447.0 963.0 L448.4 967.0 L449.9 971.0 L451.3 975.0 L452.9 979.0 L454.4 983.0 L456.0 987.0"/>
<path vector-effect="non-scaling-stroke" d="M777.4 203.0 L773.4 207.0 L769.4 211.0 L765.4 215.0 L761.5 219.0 L757.6 223.0 L753.7 227.0 L749.9 231.0 L746.1 235.0 L742.3 239.0 L738.6 243.0 L734.9 247.0 L731.3 251.0 L727.7 255.0 L724.1 259.0 L720.6 263.0 L717.1 267.0 L713.6 271.0 L710.1 275.0 L706.7 279.0 L703.4 283.0 L700.0 287.0 L696.7 291.0 L693.5 295.0 L690.2 299.0 L687.0 303.0 L683.8 307.0 L680.7 311.0 L677.6 315.0 L674.5 319.0 L671.5 323.0 L668.5 327.0 L665.5 331.0 L662.5 335.0 L659.6 339.0 L656.7 343.0 L653.9 347.0 L651.1 351.0 L648.3 355.0 L645.5 359.0 L642.8 363.0 L640.1 367.0 L637.4 371.0 L634.8 375.0 L632.1 379.0 L629.6 383.0 L627.0 387.0 L624.5 391.0 L622.0 395.0 L619.5 399.0 L617.1 403.0 L614.7 407.0 L612.3 411.0 L610.0 415.0 L607.7 419.0 L605.4 423.0 L603.1 427.0 L600.9 431.0 L598.7 435.0 L596.5 439.0 L594.3 443.0 L592.2 447.0 L590.1 451.0 L588.1 455.0 L586.0 459.0 L584.0 463.0 L582.0 467.0 L580.1 471.0 L578.1 475.0 L576.2 479.0 L574.4 483.0 L572.5 487.0 L570.7 491.0 L568.9 495.0 L567.1 499.0 L565.4 503.0 L563.7 507.0 L562.0 511.0 L560.3 515.0 L558.7 519.0 L557.1 523.0 L555.5 527.0 L554.0 531.0 L552.4 535.0 L550.9 539.0 L549.4 543.0 L548.0 547.0 L546.6 551.0 L545.2 555.0 L543.8 559.0 L542.4 563.0 L541.1 567.0 L539.8 571.0 L538.5 575.0 L537.3 579.0 L536.1 583.0 L534.9 587.0 L533.7 591.0 L532.5 595.0 L531.4 599.0 L530.3 603.0 L529.2 607.0 L528.2 611.0 L527.2 615.0 L526.2 619.0 L525.2 623.0 L524.2 627.0 L523.3 631.0 L522.4 635.0 L521.5 639.0 L520.7 643.0 L519.9 647.0 L519.1 651.0 L518.3 655.0 L517.5 659.0 L516.8 663.0 L516.1 667.0 L515.4 671.0 L514.8 675.0 L514.1 679.0 L513.5 683.0 L512.9 687.0 L512.4 691.0 L511.8 695.0 L511.3 699.0 L510.8 703.0 L510.4 707.0 L509.9 711.0 L509.5 715.0 L509.1 719.0 L508.8 723.0 L508.4 727.0 L508.1 731.0 L507.8 735.0 L507.6 739.0 L507.3 743.0 L507.1 747.0 L506.9 751.0 L506.8 755.0 L506.6 759.0 L506.5 763.0 L506.4 767.0 L506.3 771.0 L506.3 775.0 L506.3 779.0 L506.3 783.0 L506.3 787.0 L506.3 791.0 L506.4 795.0 L506.5 799.0 L506.7 803.0 L506.8 807.0 L507.0 811.0 L507.2 815.0 L507.4 819.0 L507.7 823.0 L507.9 827.0 L508.2 831.0 L508.6 835.0 L508.9 839.0 L509.3 843.0 L509.7 847.0 L510.1 851.0 L510.6 855.0 L511.1 859.0 L511.6 863.0 L512.1 867.0 L512.6 871.0 L513.2 875.0 L513.8 879.0 L514.5 883.0 L515.1 887.0 L515.8 891.0 L516.5 895.0 L517.3 899.0 L518.0 903.0 L518.8 907.0 L519.6 911.0 L520.5 915.0 L521.3 919.0 L522.2 923.0 L523.2 927.0 L524.1 931.0 L525.1 935.0 L526.1 939.0 L527.1 943.0 L528.2 947.0 L529.3 951.0 L530.4 955.0 L531.5 959.0 L532.7 963.0 L533.9 967.0 L535.1 971.0 L536.3 975.0 L537.6 979.0 L538.9 983.0 L540.3 987.0" stroke-dasharray="7 5"/>
<path vector-effect="non-scaling-stroke" d="M790.2 203.0 L786.1 207.0 L782.2 211.0 L778.2 215.0 L774.3 219.0 L770.5 223.0 L766.7 227.0 L762.9 231.0 L759.2 235.0 L755.6 239.0 L751.9 243.0 L748.3 247.0 L744.8 251.0 L741.3 255.0 L737.8 259.0 L734.4 263.0 L731.0 267.0 L727.7 271.0 L724.4 275.0 L721.1 279.0 L717.9 283.0 L714.7 287.0 L711.5 291.0 L708.4 295.0 L705.3 299.0 L702.3 303.0 L699.3 307.0 L696.3 311.0 L693.4 315.0 L690.5 319.0 L687.6 323.0 L684.8 327.0 L682.0 331.0 L679.3 335.0 L676.6 339.0 L673.9 343.0 L671.2 347.0 L668.6 351.0 L666.0 355.0 L663.4 359.0 L660.9 363.0 L658.4 367.0 L655.9 371.0 L653.5 375.0 L651.1 379.0 L648.7 383.0 L646.4 387.0 L644.1 391.0 L641.8 395.0 L639.6 399.0 L637.3 403.0 L635.2 407.0 L633.0 411.0 L630.9 415.0 L628.8 419.0 L626.7 423.0 L624.6 427.0 L622.6 431.0 L620.6 435.0 L618.7 439.0 L616.7 443.0 L614.8 447.0 L612.9 451.0 L611.1 455.0 L609.2 459.0 L607.4 463.0 L605.6 467.0 L603.9 471.0 L602.2 475.0 L600.5 479.0 L598.8 483.0 L597.1 487.0 L595.5 491.0 L593.9 495.0 L592.3 499.0 L590.8 503.0 L589.2 507.0 L587.7 511.0 L586.2 515.0 L584.8 519.0 L583.3 523.0 L581.9 527.0 L580.5 531.0 L579.2 535.0 L577.8 539.0 L576.5 543.0 L575.2 547.0 L573.9 551.0 L572.7 555.0 L571.4 559.0 L570.2 563.0 L569.1 567.0 L567.9 571.0 L566.7 575.0 L565.6 579.0 L564.5 583.0 L563.5 587.0 L562.4 591.0 L561.4 595.0 L560.4 599.0 L559.4 603.0 L558.4 607.0 L557.4 611.0 L556.5 615.0 L555.6 619.0 L554.7 623.0 L553.9 627.0 L553.0 631.0 L552.2 635.0 L551.4 639.0 L550.6 643.0 L549.9 647.0 L549.1 651.0 L548.4 655.0 L547.7 659.0 L547.0 663.0 L546.4 667.0 L545.8 671.0 L545.1 675.0 L544.5 679.0 L544.0 683.0 L543.4 687.0 L542.9 691.0 L542.4 695.0 L541.9 699.0 L541.4 703.0 L541.0 707.0 L540.5 711.0 L540.1 715.0 L539.8 719.0 L539.4 723.0 L539.0 727.0 L538.7 731.0 L538.4 735.0 L538.1 739.0 L537.9 743.0 L537.6 747.0 L537.4 751.0 L537.2 755.0 L537.1 759.0 L536.9 763.0 L536.8 767.0 L536.7 771.0 L536.6 775.0 L536.5 779.0 L536.5 783.0 L536.4 787.0 L536.4 791.0 L536.4 795.0 L536.5 799.0 L536.6 803.0 L536.6 807.0 L536.8 811.0 L536.9 815.0 L537.0 819.0 L537.2 823.0 L537.4 827.0 L537.6 831.0 L537.9 835.0 L538.2 839.0 L538.4 843.0 L538.8 847.0 L539.1 851.0 L539.5 855.0 L539.9 859.0 L540.3 863.0 L540.7 867.0 L541.2 871.0 L541.7 875.0 L542.2 879.0 L542.7 883.0 L543.3 887.0 L543.9 891.0 L544.5 895.0 L545.1 899.0 L545.8 903.0 L546.5 907.0 L547.2 911.0 L547.9 915.0 L548.7 919.0 L549.5 923.0 L550.3 927.0 L551.2 931.0 L552.0 935.0 L553.0 939.0 L553.9 943.0 L554.9 947.0 L555.8 951.0 L556.9 955.0 L557.9 959.0 L559.0 963.0 L560.1 967.0 L561.3 971.0 L562.4 975.0 L563.6 979.0 L564.9 983.0 L566.1 987.0" stroke-dasharray="8 4 2 4"/>
<path vector-effect="non-scaling-stroke" d="M856.3 203.0 L851.9 207.0 L847.5 211.0 L843.2 215.0 L838.8 219.0 L834.6 223.0 L830.3 227.0 L826.1 231.0 L821.9 235.0 L817.8 239.0 L813.7 243.0 L809.6 247.0 L805.5 251.0 L801.5 255.0 L797.5 259.0 L793.6 263.0 L789.7 267.0 L785.8 271.0 L781.9 275.0 L778.1 279.0 L774.3 283.0 L770.5 287.0 L766.8 291.0 L763.1 295.0 L759.5 299.0 L755.8 303.0 L752.3 307.0 L748.7 311.0 L745.2 315.0 L741.7 319.0 L738.2 323.0 L734.8 327.0 L731.4 331.0 L728.1 335.0 L724.7 339.0 L721.4 343.0 L718.2 347.0 L715.0 351.0 L711.8 355.0 L708.6 359.0 L705.5 363.0 L702.4 367.0 L699.3 371.0 L696.3 375.0 L693.3 379.0 L690.4 383.0 L687.5 387.0 L684.6 391.0 L681.7 395.0 L678.9 399.0 L676.1 403.0 L673.4 407.0 L670.7 411.0 L668.0 415.0 L665.3 419.0 L662.7 423.0 L660.2 427.0 L657.6 431.0 L655.1 435.0 L652.6 439.0 L650.2 443.0 L647.8 447.0 L645.4 451.0 L643.1 455.0 L640.8 459.0 L638.5 463.0 L636.3 467.0 L634.1 471.0 L631.9 475.0 L629.8 479.0 L627.7 483.0 L625.7 487.0 L623.6 491.0 L621.7 495.0 L619.7 499.0 L617.8 503.0 L615.9 507.0 L614.1 511.0 L612.3 515.0 L610.5 519.0 L608.8 523.0 L607.1 527.0 L605.4 531.0 L603.8 535.0 L602.2 539.0 L600.6 543.0 L599.1 547.0 L597.6 551.0 L596.2 555.0 L594.7 559.0 L593.4 563.0 L592.0 567.0 L590.7 571.0 L589.4 575.0 L588.2 579.0 L587.0 583.0 L585.8 587.0 L584.7 591.0 L583.6 595.0 L582.6 599.0 L581.6 603.0 L580.6 607.0 L579.6 611.0 L578.7 615.0 L577.8 619.0 L577.0 623.0 L576.2 627.0 L575.5 631.0 L574.7 635.0 L574.0 639.0 L573.4 643.0 L572.8 647.0 L572.2 651.0 L571.7 655.0 L571.2 659.0 L570.7 663.0 L570.3 667.0 L569.9 671.0 L569.5 675.0 L569.2 679.0 L568.9 683.0 L568.7 687.0 L568.5 691.0 L568.3 695.0 L568.2 699.0 L568.1 703.0 L568.0 707.0 L568.0 711.0 L568.0 715.0 L568.1 719.0 L568.2 723.0 L568.3 727.0 L568.5 731.0 L568.7 735.0 L568.9 739.0 L569.2 743.0 L569.5 747.0 L569.9 751.0 L570.3 755.0 L570.7 759.0 L571.2 763.0 L571.7 767.0 L572.2 771.0 L572.8 775.0 L573.5 779.0 L574.1 783.0 L574.8 787.0 L575.6 791.0 L576.4 795.0 L577.2 799.0 L578.0 803.0 L578.9 807.0 L579.9 811.0 L580.8 815.0 L581.8 819.0 L582.9 823.0 L584.0 827.0 L585.1 831.0 L586.3 835.0 L587.5 839.0 L588.7 843.0 L590.0 847.0 L591.3 851.0 L592.7 855.0 L594.1 859.0 L595.5 863.0 L597.0 867.0 L598.5 871.0 L600.1 875.0 L601.7 879.0 L603.3 883.0 L605.0 887.0 L606.7 891.0 L608.5 895.0 L610.3 899.0 L612.1 903.0 L614.0 907.0 L615.9 911.0 L617.9 915.0 L619.9 919.0 L621.9 923.0 L624.0 927.0 L626.1 931.0 L628.2 935.0 L630.4 939.0 L632.7 943.0 L634.9 947.0 L637.3 951.0 L639.6 955.0 L642.0 959.0 L644.4 963.0 L646.9 967.0 L649.4 971.0 L652.0 975.0 L654.6 979.0 L657.2 983.0 L659.9 987.0"/>
<path vector-effect="non-scaling-stroke" d="M880.0 203.0 L875.3 207.0 L870.7 211.0 L866.1 215.0 L861.6 219.0 L857.1 223.0 L852.6 227.0 L848.2 231.0 L843.8 235.0 L839.5 239.0 L835.2 243.0 L830.9 247.0 L826.7 251.0 L822.6 255.0 L818.4 259.0 L814.3 263.0 L810.3 267.0 L806.3 271.0 L802.3 275.0 L798.4 279.0 L794.5 283.0 L790.7 287.0 L786.9 291.0 L783.2 295.0 L779.5 299.0 L775.8 303.0 L772.1 307.0 L768.6 311.0 L765.0 315.0 L761.5 319.0 L758.0 323.0 L754.6 327.0 L751.2 331.0 L747.9 335.0 L744.6 339.0 L741.3 343.0 L738.1 347.0 L734.9 351.0 L731.7 355.0 L728.6 359.0 L725.6 363.0 L722.5 367.0 L719.5 371.0 L716.6 375.0 L713.7 379.0 L710.8 383.0 L708.0 387.0 L705.2 391.0 L702.5 395.0 L699.7 399.0 L697.1 403.0 L694.4 407.0 L691.8 411.0 L689.3 415.0 L686.8 419.0 L684.3 423.0 L681.9 427.0 L679.5 431.0 L677.1 435.0 L674.8 439.0 L672.5 443.0 L670.3 447.0 L668.0 451.0 L665.9 455.0 L663.7 459.0 L661.7 463.0 L659.6 467.0 L657.6 471.0 L655.6 475.0 L653.7 479.0 L651.8 483.0 L649.9 487.0 L648.1 491.0 L646.3 495.0 L644.5 499.0 L642.8 503.0 L641.2 507.0 L639.5 511.0 L637.9 515.0 L636.4 519.0 L634.8 523.0 L633.3 527.0 L631.9 531.0 L630.5 535.0 L629.1 539.0 L627.8 543.0 L626.5 547.0 L625.2 551.0 L624.0 555.0 L622.8 559.0 L621.6 563.0 L620.5 567.0 L619.4 571.0 L618.4 575.0 L617.4 579.0 L616.4 583.0 L615.4 587.0 L614.5 591.0 L613.7 595.0 L612.8 599.0 L612.0 603.0 L611.3 607.0 L610.6 611.0 L609.9 615.0 L609.2 619.0 L608.6 623.0 L608.0 627.0 L607.5 631.0 L607.0 635.0 L606.5 639.0 L606.1 643.0 L605.7 647.0 L605.3 651.0 L605.0 655.0 L604.7 659.0 L604.4 663.0 L604.2 667.0 L604.0 671.0 L603.8 675.0 L603.7 679.0 L603.6 683.0 L603.6 687.0 L603.5 691.0 L603.6 695.0 L603.6 699.0 L603.7 703.0 L603.8 707.0 L604.0 711.0 L604.1 715.0 L604.4 719.0 L604.6 723.0 L604.9 727.0 L605.2 731.0 L605.6 735.0 L606.0 739.0 L606.4 743.0 L606.8 747.0 L607.3 751.0 L607.9 755.0 L608.4 759.0 L609.0 763.0 L609.6 767.0 L610.3 771.0 L611.0 775.0 L611.7 779.0 L612.4 783.0 L613.2 787.0 L614.1 791.0 L614.9 795.0 L615.8 799.0 L616.7 803.0 L617.7 807.0 L618.6 811.0 L619.7 815.0 L620.7 819.0 L621.8 823.0 L622.9 827.0 L624.1 831.0 L625.2 835.0 L626.4 839.0 L627.7 843.0 L629.0 847.0 L630.3 851.0 L631.6 855.0 L633.0 859.0 L634.4 863.0 L635.8 867.0 L637.3 871.0 L638.8 875.0 L640.3 879.0 L641.8 883.0 L643.4 887.0 L645.1 891.0 L646.7 895.0 L648.4 899.0 L650.1 903.0 L651.9 907.0 L653.6 911.0 L655.4 915.0 L657.3 919.0 L659.1 923.0 L661.0 927.0 L663.0 931.0 L664.9 935.0 L666.9 939.0 L668.9 943.0 L671.0 947.0 L673.1 951.0 L675.2 955.0 L677.3 959.0 L679.5 963.0 L681.7 967.0 L683.9 971.0 L686.2 975.0 L688.5 979.0 L690.8 983.0 L693.2 987.0"/>
<path vector-effect="non-scaling-stroke" d="M894.5 203.0 L889.8 207.0 L885.2 211.0 L880.6 215.0 L876.0 219.0 L871.5 223.0 L867.0 227.0 L862.6 231.0 L858.2 235.0 L853.9 239.0 L849.5 243.0 L845.3 247.0 L841.1 251.0 L836.9 255.0 L832.7 259.0 L828.6 263.0 L824.6 267.0 L820.6 271.0 L816.6 275.0 L812.7 279.0 L808.8 283.0 L804.9 287.0 L801.1 291.0 L797.4 295.0 L793.7 299.0 L790.0 303.0 L786.3 307.0 L782.7 311.0 L779.2 315.0 L775.7 319.0 L772.2 323.0 L768.7 327.0 L765.4 331.0 L762.0 335.0 L758.7 339.0 L755.4 343.0 L752.2 347.0 L749.0 351.0 L745.8 355.0 L742.7 359.0 L739.7 363.0 L736.6 367.0 L733.6 371.0 L730.7 375.0 L727.8 379.0 L724.9 383.0 L722.1 387.0 L719.3 391.0 L716.5 395.0 L713.8 399.0 L711.2 403.0 L708.5 407.0 L705.9 411.0 L703.4 415.0 L700.9 419.0 L698.4 423.0 L696.0 427.0 L693.6 431.0 L691.2 435.0 L688.9 439.0 L686.6 443.0 L684.4 447.0 L682.2 451.0 L680.0 455.0 L677.9 459.0 L675.8 463.0 L673.8 467.0 L671.8 471.0 L669.8 475.0 L667.9 479.0 L666.0 483.0 L664.2 487.0 L662.4 491.0 L660.6 495.0 L658.8 499.0 L657.1 503.0 L655.5 507.0 L653.9 511.0 L652.3 515.0 L650.7 519.0 L649.2 523.0 L647.8 527.0 L646.3 531.0 L644.9 535.0 L643.6 539.0 L642.3 543.0 L641.0 547.0 L639.7 551.0 L638.5 555.0 L637.4 559.0 L636.2 563.0 L635.1 567.0 L634.1 571.0 L633.1 575.0 L632.1 579.0 L631.1 583.0 L630.2 587.0 L629.3 591.0 L628.5 595.0 L627.7 599.0 L627.0 603.0 L626.2 607.0 L625.5 611.0 L624.9 615.0 L624.3 619.0 L623.7 623.0 L623.1 627.0 L622.6 631.0 L622.2 635.0 L621.7 639.0 L621.3 643.0 L621.0 647.0 L620.6 651.0 L620.3 655.0 L620.1 659.0 L619.9 663.0 L619.7 667.0 L619.5 671.0 L619.4 675.0 L619.3 679.0 L619.3 683.0 L619.3 687.0 L619.3 691.0 L619.4 695.0 L619.5 699.0 L619.6 703.0 L619.8 707.0 L620.0 711.0 L620.2 715.0 L620.5 719.0 L620.8 723.0 L621.2 727.0 L621.5 731.0 L621.9 735.0 L622.4 739.0 L622.9 743.0 L623.4 747.0 L623.9 751.0 L624.5 755.0 L625.1 759.0 L625.8 763.0 L626.5 767.0 L627.2 771.0 L628.0 775.0 L628.8 779.0 L629.6 783.0 L630.4 787.0 L631.3 791.0 L632.2 795.0 L633.2 799.0 L634.2 803.0 L635.2 807.0 L636.3 811.0 L637.4 815.0 L638.5 819.0 L639.7 823.0 L640.9 827.0 L642.1 831.0 L643.3 835.0 L644.6 839.0 L646.0 843.0 L647.3 847.0 L648.7 851.0 L650.1 855.0 L651.6 859.0 L653.1 863.0 L654.6 867.0 L656.1 871.0 L657.7 875.0 L659.3 879.0 L661.0 883.0 L662.7 887.0 L664.4 891.0 L666.1 895.0 L667.9 899.0 L669.7 903.0 L671.6 907.0 L673.5 911.0 L675.4 915.0 L677.3 919.0 L679.3 923.0 L681.3 927.0 L683.3 931.0 L685.4 935.0 L687.5 939.0 L689.6 943.0 L691.8 947.0 L693.9 951.0 L696.2 955.0 L698.4 959.0 L700.7 963.0 L703.0 967.0 L705.4 971.0 L707.8 975.0 L710.2 979.0 L712.6 983.0 L715.1 987.0"/>
<path vector-effect="non-scaling-stroke" d="M938.7 203.0 L933.6 207.0 L928.4 211.0 L923.4 215.0 L918.3 219.0 L913.3 223.0 L908.4 227.0 L903.5 231.0 L898.7 235.0 L893.9 239.0 L889.1 243.0 L884.4 247.0 L879.7 251.0 L875.1 255.0 L870.6 259.0 L866.0 263.0 L861.6 267.0 L857.1 271.0 L852.7 275.0 L848.4 279.0 L844.1 283.0 L839.8 287.0 L835.6 291.0 L831.5 295.0 L827.4 299.0 L823.3 303.0 L819.3 307.0 L815.3 311.0 L811.3 315.0 L807.5 319.0 L803.6 323.0 L799.8 327.0 L796.0 331.0 L792.3 335.0 L788.7 339.0 L785.0 343.0 L781.5 347.0 L777.9 351.0 L774.4 355.0 L771.0 359.0 L767.6 363.0 L764.2 367.0 L760.9 371.0 L757.7 375.0 L754.4 379.0 L751.3 383.0 L748.1 387.0 L745.0 391.0 L742.0 395.0 L739.0 399.0 L736.0 403.0 L733.1 407.0 L730.2 411.0 L727.4 415.0 L724.6 419.0 L721.9 423.0 L719.2 427.0 L716.5 431.0 L713.9 435.0 L711.3 439.0 L708.8 443.0 L706.3 447.0 L703.9 451.0 L701.5 455.0 L699.1 459.0 L696.8 463.0 L694.6 467.0 L692.3 471.0 L690.1 475.0 L688.0 479.0 L685.9 483.0 L683.8 487.0 L681.8 491.0 L679.9 495.0 L677.9 499.0 L676.0 503.0 L674.2 507.0 L672.4 511.0 L670.6 515.0 L668.9 519.0 L667.2 523.0 L665.6 527.0 L664.0 531.0 L662.5 535.0 L661.0 539.0 L659.5 543.0 L658.1 547.0 L656.7 551.0 L655.3 555.0 L654.0 559.0 L652.8 563.0 L651.6 567.0 L650.4 571.0 L649.2 575.0 L648.1 579.0 L647.1 583.0 L646.1 587.0 L645.1 591.0 L644.2 595.0 L643.3 599.0 L642.4 603.0 L641.6 607.0 L640.9 611.0 L640.1 615.0 L639.4 619.0 L638.8 623.0 L638.2 627.0 L637.6 631.0 L637.1 635.0 L636.6 639.0 L636.2 643.0 L635.8 647.0 L635.4 651.0 L635.1 655.0 L634.8 659.0 L634.5 663.0 L634.3 667.0 L634.2 671.0 L634.0 675.0 L634.0 679.0 L633.9 683.0 L633.9 687.0 L633.9 691.0 L634.0 695.0 L634.1 699.0 L634.3 703.0 L634.5 707.0 L634.7 711.0 L635.0 715.0 L635.3 719.0 L635.6 723.0 L636.0 727.0 L636.4 731.0 L636.9 735.0 L637.4 739.0 L637.9 743.0 L638.5 747.0 L639.1 751.0 L639.8 755.0 L640.5 759.0 L641.2 763.0 L642.0 767.0 L642.8 771.0 L643.6 775.0 L644.5 779.0 L645.4 783.0 L646.4 787.0 L647.4 791.0 L648.4 795.0 L649.5 799.0 L650.6 803.0 L651.8 807.0 L653.0 811.0 L654.2 815.0 L655.5 819.0 L656.8 823.0 L658.1 827.0 L659.5 831.0 L660.9 835.0 L662.4 839.0 L663.8 843.0 L665.4 847.0 L666.9 851.0 L668.5 855.0 L670.2 859.0 L671.8 863.0 L673.6 867.0 L675.3 871.0 L677.1 875.0 L678.9 879.0 L680.8 883.0 L682.7 887.0 L684.6 891.0 L686.6 895.0 L688.6 899.0 L690.6 903.0 L692.7 907.0 L694.8 911.0 L697.0 915.0 L699.1 919.0 L701.4 923.0 L703.6 927.0 L705.9 931.0 L708.3 935.0 L710.6 939.0 L713.0 943.0 L715.5 947.0 L717.9 951.0 L720.4 955.0 L723.0 959.0 L725.6 963.0 L728.2 967.0 L730.8 971.0 L733.5 975.0 L736.2 979.0 L739.0 983.0 L741.8 987.0"/>
<path vector-effect="non-scaling-stroke" d="M957.9 203.0 L952.6 207.0 L947.4 211.0 L942.2 215.0 L937.1 219.0 L932.0 223.0 L927.0 227.0 L922.0 231.0 L917.1 235.0 L912.2 239.0 L907.3 243.0 L902.5 247.0 L897.8 251.0 L893.1 255.0 L888.4 259.0 L883.8 263.0 L879.3 267.0 L874.8 271.0 L870.3 275.0 L865.9 279.0 L861.5 283.0 L857.2 287.0 L852.9 291.0 L848.6 295.0 L844.4 299.0 L840.3 303.0 L836.2 307.0 L832.2 311.0 L828.1 315.0 L824.2 319.0 L820.3 323.0 L816.4 327.0 L812.6 331.0 L808.8 335.0 L805.1 339.0 L801.4 343.0 L797.7 347.0 L794.1 351.0 L790.6 355.0 L787.1 359.0 L783.6 363.0 L780.2 367.0 L776.8 371.0 L773.5 375.0 L770.2 379.0 L767.0 383.0 L763.8 387.0 L760.7 391.0 L757.6 395.0 L754.5 399.0 L751.5 403.0 L748.5 407.0 L745.6 411.0 L742.7 415.0 L739.9 419.0 L737.1 423.0 L734.4 427.0 L731.7 431.0 L729.0 435.0 L726.4 439.0 L723.8 443.0 L721.3 447.0 L718.8 451.0 L716.4 455.0 L714.0 459.0 L711.6 463.0 L709.3 467.0 L707.1 471.0 L704.9 475.0 L702.7 479.0 L700.6 483.0 L698.5 487.0 L696.4 491.0 L694.4 495.0 L692.5 499.0 L690.6 503.0 L688.7 507.0 L686.9 511.0 L685.1 515.0 L683.3 519.0 L681.6 523.0 L680.0 527.0 L678.4 531.0 L676.8 535.0 L675.3 539.0 L673.8 543.0 L672.3 547.0 L670.9 551.0 L669.6 555.0 L668.2 559.0 L667.0 563.0 L665.7 567.0 L664.5 571.0 L663.4 575.0 L662.3 579.0 L661.2 583.0 L660.2 587.0 L659.2 591.0 L658.3 595.0 L657.4 599.0 L656.5 603.0 L655.7 607.0 L654.9 611.0 L654.2 615.0 L653.5 619.0 L652.9 623.0 L652.3 627.0 L651.7 631.0 L651.2 635.0 L650.7 639.0 L650.3 643.0 L649.9 647.0 L649.5 651.0 L649.2 655.0 L648.9 659.0 L648.7 663.0 L648.5 667.0 L648.3 671.0 L648.2 675.0 L648.1 679.0 L648.1 683.0 L648.1 687.0 L648.1 691.0 L648.2 695.0 L648.3 699.0 L648.5 703.0 L648.7 707.0 L649.0 711.0 L649.3 715.0 L649.6 719.0 L650.0 723.0 L650.4 727.0 L650.8 731.0 L651.3 735.0 L651.8 739.0 L652.4 743.0 L653.0 747.0 L653.6 751.0 L654.3 755.0 L655.0 759.0 L655.8 763.0 L656.6 767.0 L657.4 771.0 L658.3 775.0 L659.2 779.0 L660.2 783.0 L661.2 787.0 L662.2 791.0 L663.3 795.0 L664.4 799.0 L665.6 803.0 L666.8 807.0 L668.0 811.0 L669.3 815.0 L670.6 819.0 L671.9 823.0 L673.3 827.0 L674.7 831.0 L676.2 835.0 L677.7 839.0 L679.2 843.0 L680.8 847.0 L682.4 851.0 L684.0 855.0 L685.7 859.0 L687.5 863.0 L689.2 867.0 L691.0 871.0 L692.9 875.0 L694.7 879.0 L696.6 883.0 L698.6 887.0 L700.6 891.0 L702.6 895.0 L704.7 899.0 L706.8 903.0 L708.9 907.0 L711.1 911.0 L713.3 915.0 L715.5 919.0 L717.8 923.0 L720.2 927.0 L722.5 931.0 L724.9 935.0 L727.3 939.0 L729.8 943.0 L732.3 947.0 L734.9 951.0 L737.4 955.0 L740.1 959.0 L742.7 963.0 L745.4 967.0 L748.1 971.0 L750.9 975.0 L753.7 979.0 L756.5 983.0 L759.4 987.0" stroke-dasharray="7 5"/>
<path vector-effect="non-scaling-stroke" d="M1000.4 203.0 L994.8 207.0 L989.2 211.0 L983.7 215.0 L978.2 219.0 L972.8 223.0 L967.4 227.0 L962.0 231.0 L956.8 235.0 L951.5 239.0 L946.4 243.0 L941.2 247.0 L936.2 251.0 L931.2 255.0 L926.2 259.0 L921.3 263.0 L916.4 267.0 L911.6 271.0 L906.9 275.0 L902.2 279.0 L897.5 283.0 L892.9 287.0 L888.3 291.0 L883.8 295.0 L879.4 299.0 L875.0 303.0 L870.6 307.0 L866.3 311.0 L862.1 315.0 L857.9 319.0 L853.7 323.0 L849.6 327.0 L845.6 331.0 L841.6 335.0 L837.7 339.0 L833.8 343.0 L829.9 347.0 L826.1 351.0 L822.4 355.0 L818.7 359.0 L815.0 363.0 L811.4 367.0 L807.9 371.0 L804.4 375.0 L800.9 379.0 L797.5 383.0 L794.2 387.0 L790.9 391.0 L787.6 395.0 L784.4 399.0 L781.2 403.0 L778.1 407.0 L775.1 411.0 L772.0 415.0 L769.1 419.0 L766.2 423.0 L763.3 427.0 L760.5 431.0 L757.7 435.0 L755.0 439.0 L752.3 443.0 L749.7 447.0 L747.1 451.0 L744.5 455.0 L742.0 459.0 L739.6 463.0 L737.2 467.0 L734.9 471.0 L732.6 475.0 L730.3 479.0 L728.1 483.0 L725.9 487.0 L723.8 491.0 L721.7 495.0 L719.7 499.0 L717.8 503.0 L715.8 507.0 L713.9 511.0 L712.1 515.0 L710.3 519.0 L708.6 523.0 L706.9 527.0 L705.2 531.0 L703.6 535.0 L702.0 539.0 L700.5 543.0 L699.1 547.0 L697.6 551.0 L696.2 555.0 L694.9 559.0 L693.6 563.0 L692.4 567.0 L691.2 571.0 L690.0 575.0 L688.9 579.0 L687.8 583.0 L686.8 587.0 L685.8 591.0 L684.9 595.0 L684.0 599.0 L683.1 603.0 L682.3 607.0 L681.6 611.0 L680.9 615.0 L680.2 619.0 L679.6 623.0 L679.0 627.0 L678.4 631.0 L677.9 635.0 L677.5 639.0 L677.1 643.0 L676.7 647.0 L676.4 651.0 L676.1 655.0 L675.9 659.0 L675.7 663.0 L675.5 667.0 L675.4 671.0 L675.3 675.0 L675.3 679.0 L675.3 683.0 L675.4 687.0 L675.5 691.0 L675.6 695.0 L675.8 699.0 L676.0 703.0 L676.3 707.0 L676.6 711.0 L676.9 715.0 L677.3 719.0 L677.7 723.0 L678.2 727.0 L678.7 731.0 L679.3 735.0 L679.9 739.0 L680.5 743.0 L681.2 747.0 L681.9 751.0 L682.7 755.0 L683.5 759.0 L684.3 763.0 L685.2 767.0 L686.1 771.0 L687.1 775.0 L688.1 779.0 L689.1 783.0 L690.2 787.0 L691.3 791.0 L692.5 795.0 L693.7 799.0 L694.9 803.0 L696.2 807.0 L697.5 811.0 L698.8 815.0 L700.2 819.0 L701.7 823.0 L703.1 827.0 L704.7 831.0 L706.2 835.0 L707.8 839.0 L709.4 843.0 L711.1 847.0 L712.8 851.0 L714.5 855.0 L716.3 859.0 L718.1 863.0 L720.0 867.0 L721.9 871.0 L723.8 875.0 L725.8 879.0 L727.8 883.0 L729.8 887.0 L731.9 891.0 L734.1 895.0 L736.2 899.0 L738.4 903.0 L740.6 907.0 L742.9 911.0 L745.2 915.0 L747.6 919.0 L749.9 923.0 L752.4 927.0 L754.8 931.0 L757.3 935.0 L759.8 939.0 L762.4 943.0 L765.0 947.0 L767.6 951.0 L770.3 955.0 L773.0 959.0 L775.7 963.0 L778.5 967.0 L781.3 971.0 L784.2 975.0 L787.1 979.0 L790.0 983.0 L793.0 987.0"/>
<path vector-effect="non-scaling-stroke" d="M1597.7 208.8 L1601.7 209.6 L1605.7 210.5 L1609.7 211.5 L1613.7 212.4 L1617.7 213.4 L1621.7 214.4 L1625.7 215.4 L1629.7 216.5 L1633.7 217.6 L1637.7 218.7 L1641.7 219.8 L1645.7 220.9 L1649.7 222.1 L1653.7 223.3 L1657.7 224.6 L1661.7 225.8 L1665.7 227.1 L1669.7 228.4 L1673.7 229.7 L1677.7 231.1 L1681.7 232.5 L1685.7 233.9 L1689.7 235.3 L1693.7 236.8 L1697.7 238.2 L1701.7 239.7 L1705.7 241.3 L1709.7 242.8 L1713.7 244.4 L1717.7 246.0 L1721.7 247.6 L1725.7 249.3 L1729.7 251.0 L1733.7 252.7 L1737.7 254.4 L1741.7 256.2 L1745.7 257.9 L1749.7 259.8 L1753.7 261.6 L1757.7 263.4 L1761.7 265.3 L1765.7 267.2 L1769.7 269.2 L1773.7 271.1 L1777.7 273.1 L1781.7 275.1 L1785.7 277.1 L1789.7 279.2"/>
<path vector-effect="non-scaling-stroke" d="M1662.8 207.2 L1666.8 208.7 L1670.8 210.2 L1674.8 211.8 L1678.8 213.3 L1682.8 214.8 L1686.8 216.4 L1690.8 217.9 L1694.8 219.4 L1698.8 221.0 L1702.8 222.5 L1706.8 224.1 L1710.8 225.6 L1714.8 227.1 L1718.8 228.7 L1722.8 230.2 L1726.8 231.7 L1730.8 233.3 L1734.8 234.8 L1738.8 236.3 L1742.8 237.9 L1746.8 239.4 L1750.8 240.9 L1754.8 242.5 L1758.8 244.0 L1762.8 245.6 L1766.8 247.1 L1770.8 248.6 L1774.8 250.2 L1778.8 251.7 L1782.8 253.2 L1786.8 254.8 L1790.8 256.3" stroke-dasharray="7 5"/>
<path vector-effect="non-scaling-stroke" d="M1696.7 207.1 L1700.7 208.6 L1704.7 210.2 L1708.7 211.8 L1712.7 213.4 L1716.7 214.9 L1720.7 216.5 L1724.7 218.1 L1728.7 219.7 L1732.7 221.2 L1736.7 222.8 L1740.7 224.4 L1744.7 226.0 L1748.7 227.5 L1752.7 229.1 L1756.7 230.7 L1760.7 232.3 L1764.7 233.8 L1768.7 235.4 L1772.7 237.0 L1776.7 238.5 L1780.7 240.1 L1784.7 241.7 L1788.7 243.3"/>
<path vector-effect="non-scaling-stroke" d="M1785.2 769.0 L1782.0 773.0 L1778.8 777.0 L1775.5 781.0 L1772.2 785.0 L1768.9 789.0 L1765.5 793.0 L1762.1 797.0 L1758.7 801.0 L1755.2 805.0 L1751.6 809.0 L1748.1 813.0 L1744.5 817.0 L1740.8 821.0 L1737.1 825.0 L1733.4 829.0 L1729.7 833.0 L1725.9 837.0 L1722.0 841.0 L1718.2 845.0 L1714.2 849.0 L1710.3 853.0 L1706.3 857.0 L1702.3 861.0 L1698.2 865.0 L1694.1 869.0 L1690.0 873.0 L1685.8 877.0 L1681.6 881.0 L1677.3 885.0 L1673.0 889.0 L1668.7 893.0 L1664.3 897.0 L1659.9 901.0 L1655.5 905.0 L1651.0 909.0 L1646.5 913.0 L1641.9 917.0 L1637.3 921.0 L1632.7 925.0 L1628.0 929.0 L1623.3 933.0 L1618.5 937.0 L1613.7 941.0 L1608.9 945.0 L1604.0 949.0 L1599.1 953.0 L1594.2 957.0 L1589.2 961.0 L1584.2 965.0 L1579.1 969.0 L1574.0 973.0 L1568.9 977.0 L1563.7 981.0 L1558.5 985.0"/>
<path vector-effect="non-scaling-stroke" d="M1786.8 798.0 L1782.5 802.0 L1778.3 806.0 L1774.0 810.0 L1769.7 814.0 L1765.5 818.0 L1761.2 822.0 L1757.0 826.0 L1752.7 830.0 L1748.4 834.0 L1744.2 838.0 L1739.9 842.0 L1735.6 846.0 L1731.4 850.0 L1727.1 854.0 L1722.9 858.0 L1718.6 862.0 L1714.3 866.0 L1710.1 870.0 L1705.8 874.0 L1701.6 878.0 L1697.3 882.0 L1693.0 886.0 L1688.8 890.0 L1684.5 894.0 L1680.2 898.0 L1676.0 902.0 L1671.7 906.0 L1667.5 910.0 L1663.2 914.0 L1658.9 918.0 L1654.7 922.0 L1650.4 926.0 L1646.1 930.0 L1641.9 934.0 L1637.6 938.0 L1633.4 942.0 L1629.1 946.0 L1624.8 950.0 L1620.6 954.0 L1616.3 958.0 L1612.0 962.0 L1607.8 966.0 L1603.5 970.0 L1599.3 974.0 L1595.0 978.0 L1590.7 982.0 L1586.5 986.0" stroke-dasharray="7 5"/>
<path vector-effect="non-scaling-stroke" d="M1786.8 813.2 L1782.5 817.2 L1778.3 821.2 L1774.0 825.2 L1769.8 829.2 L1765.5 833.2 L1761.3 837.2 L1757.1 841.2 L1752.8 845.2 L1748.6 849.2 L1744.3 853.2 L1740.1 857.2 L1735.8 861.2 L1731.6 865.2 L1727.3 869.2 L1723.1 873.2 L1718.9 877.2 L1714.6 881.2 L1710.4 885.2 L1706.1 889.2 L1701.9 893.2 L1697.6 897.2 L1693.4 901.2 L1689.1 905.2 L1684.9 909.2 L1680.6 913.2 L1676.4 917.2 L1672.2 921.2 L1667.9 925.2 L1663.7 929.2 L1659.4 933.2 L1655.2 937.2 L1650.9 941.2 L1646.7 945.2 L1642.4 949.2 L1638.2 953.2 L1634.0 957.2 L1629.7 961.2 L1625.5 965.2 L1621.2 969.2 L1617.0 973.2 L1612.7 977.2 L1608.5 981.2 L1604.2 985.2"/>
<path vector-effect="non-scaling-stroke" d="M1786.6 826.0 L1782.5 830.0 L1778.3 834.0 L1774.2 838.0 L1770.1 842.0 L1766.0 846.0 L1761.9 850.0 L1757.8 854.0 L1753.7 858.0 L1749.6 862.0 L1745.5 866.0 L1741.4 870.0 L1737.3 874.0 L1733.2 878.0 L1729.1 882.0 L1725.0 886.0 L1720.9 890.0 L1716.8 894.0 L1712.7 898.0 L1708.6 902.0 L1704.5 906.0 L1700.4 910.0 L1696.3 914.0 L1692.1 918.0 L1688.0 922.0 L1683.9 926.0 L1679.8 930.0 L1675.7 934.0 L1671.6 938.0 L1667.5 942.0 L1663.4 946.0 L1659.3 950.0 L1655.2 954.0 L1651.1 958.0 L1647.0 962.0 L1642.9 966.0 L1638.8 970.0 L1634.7 974.0 L1630.6 978.0 L1626.5 982.0 L1622.4 986.0"/>
<path vector-effect="non-scaling-stroke" d="M1786.6 845.9 L1782.5 849.9 L1778.3 853.9 L1774.2 857.9 L1770.1 861.9 L1766.0 865.9 L1761.8 869.9 L1757.7 873.9 L1753.6 877.9 L1749.5 881.9 L1745.3 885.9 L1741.2 889.9 L1737.1 893.9 L1733.0 897.9 L1728.9 901.9 L1724.7 905.9 L1720.6 909.9 L1716.5 913.9 L1712.4 917.9 L1708.2 921.9 L1704.1 925.9 L1700.0 929.9 L1695.9 933.9 L1691.7 937.9 L1687.6 941.9 L1683.5 945.9 L1679.4 949.9 L1675.2 953.9 L1671.1 957.9 L1667.0 961.9 L1662.9 965.9 L1658.7 969.9 L1654.6 973.9 L1650.5 977.9 L1646.4 981.9 L1642.2 985.9"/>
<path vector-effect="non-scaling-stroke" d="M1787.0 885.2 L1782.6 889.2 L1778.2 893.2 L1773.8 897.2 L1769.4 901.2 L1765.0 905.2 L1760.6 909.2 L1756.2 913.2 L1751.9 917.2 L1747.5 921.2 L1743.1 925.2 L1738.7 929.2 L1734.3 933.2 L1729.9 937.2 L1725.5 941.2 L1721.1 945.2 L1716.7 949.2 L1712.3 953.2 L1707.9 957.2 L1703.5 961.2 L1699.1 965.2 L1694.8 969.2 L1690.4 973.2 L1686.0 977.2 L1681.6 981.2 L1677.2 985.2"/>
</g></g>
</defs>
</svg>
<!-- thumbnails -->
<div class="t" style="left:14px;top:218.5px;font-size:15px;color:#444">1</div>
<div class="t" style="left:14px;top:368px;font-size:15px;color:#c43e1c">2</div>
<div class="t" style="left:14px;top:517px;font-size:15px;color:#444">3</div>
<svg class="a" style="left:43px;top:219px" width="220" height="125" viewBox="43 219 220 125">
<rect x="44.5" y="220.5" width="217" height="123" fill="#fff" stroke="#c6c6c6"/>
<svg x="45" y="221" width="216" height="122" viewBox="45 221 216 122"><g fill="none" stroke="#c4c4c4" stroke-width="0.8"><ellipse cx="128" cy="292" rx="62" ry="46" transform="rotate(-18 128 292)"/><ellipse cx="132" cy="293" rx="72" ry="53" transform="rotate(-15 132 293)"/><ellipse cx="136" cy="290" rx="84" ry="60" transform="rotate(-20 136 290)"/><ellipse cx="140" cy="292" rx="96" ry="68" transform="rotate(-12 140 292)"/><ellipse cx="144" cy="290" rx="110" ry="78" transform="rotate(-16 144 290)"/><ellipse cx="150" cy="292" rx="126" ry="88" transform="rotate(-10 150 292)"/><ellipse cx="152" cy="288" rx="144" ry="100" transform="rotate(-14 152 288)"/><ellipse cx="156" cy="290" rx="165" ry="114" transform="rotate(-10 156 290)"/></g></svg>
<rect x="75" y="242" width="156" height="73" fill="#f71b04"/>
<rect x="75" y="255" width="156" height="1" fill="#fff" opacity="0.9"/>
<path d="M149 315h8l-4 5z" fill="#f71b04"/>
<text x="153" y="286" text-anchor="middle" font-family="Liberation Sans" font-size="10" fill="#fff" textLength="68" lengthAdjust="spacingAndGlyphs">Insert a picture</text>
</svg>
<div class="a" style="left:41px;top:366px;width:224px;height:130px;border:3px solid #6f0b0b;background:#fff"></div>
<svg class="a" style="left:44px;top:369px" width="218" height="124" viewBox="409 209 1375 782" preserveAspectRatio="none">
<use href="#arcs" stroke="#c4c4c4" stroke-width="0.9"/>
<rect x="500" y="401" width="414" height="57" fill="#f71b04"/>
<rect x="501" y="466" width="413" height="296" fill="#f71b04"/>
<path d="M689 761L725 761L707 792Z" fill="#f71b04"/>
<text x="707" y="605" text-anchor="middle" font-family="Liberation Sans" font-size="60" fill="#fff" textLength="290" lengthAdjust="spacingAndGlyphs">Pictures of Ice</text>
<text x="707" y="665" text-anchor="middle" font-family="Liberation Sans" font-size="60" fill="#fff" textLength="135" lengthAdjust="spacingAndGlyphs">cream</text>
</svg>
<svg class="a" style="left:43px;top:518px" width="220" height="125" viewBox="43 518 220 125">
<rect x="43.5" y="518.5" width="219" height="124" fill="#fff" stroke="#c6c6c6"/>
</svg>
<svg class="a" style="left:44px;top:519px" width="218" height="123" viewBox="409 209 1375 775" preserveAspectRatio="none">
<use href="#arcs" stroke="#c4c4c4" stroke-width="0.9"/>
<rect x="500" y="401" width="414" height="57" fill="#f71b04"/>
<rect x="501" y="466" width="413" height="296" fill="#f71b04"/>
<path d="M689 761L725 761L707 792Z" fill="#f71b04"/>
<text x="707" y="630" text-anchor="middle" font-family="Liberation Sans" font-size="60" fill="#fff" textLength="240" lengthAdjust="spacingAndGlyphs">Thank you!</text>
</svg>
<!-- main slide -->
<svg class="a" style="left:409px;top:209px" width="1375" height="775" viewBox="409 209 1375 775">
<rect x="409.5" y="209.5" width="1374" height="774" fill="#fff" stroke="#c6c6c6"/>
<svg x="411" y="211" width="1371" height="771" viewBox="411 211 1371 771"><use href="#arcs" stroke="#d6d6d6" stroke-width="1.2"/></svg>
<rect x="500" y="401" width="414" height="57" fill="#f71b04"/>
<rect x="501" y="466" width="413" height="296" fill="#f71b04"/>
<path d="M689.3 761.5L725 761.5L707.3 791.5Z" fill="#f71b04"/>
<text x="708" y="597.8" text-anchor="middle" font-family="Liberation Sans" font-size="54" fill="#fff" stroke="#f71b04" stroke-width="0.8" textLength="294" lengthAdjust="spacingAndGlyphs">Pictures of Ice</text>
<text x="707.2" y="655.6" text-anchor="middle" font-family="Liberation Sans" font-size="54" fill="#fff" stroke="#f71b04" stroke-width="0.8" textLength="133" lengthAdjust="spacingAndGlyphs">cream</text>
<rect x="985.5" y="299.5" width="711" height="594" fill="none" stroke="#707070" stroke-dasharray="2 2"/>
<rect x="999" y="593" width="8.5" height="8.3" fill="#f71b04"/>
<text x="1023" y="606.8" font-family="Liberation Serif" font-size="26.5" fill="#000" stroke="#000" stroke-width="0.35" textLength="194.5" lengthAdjust="spacingAndGlyphs">Click to add text</text>
<text x="1271.2" y="924.2" font-family="Liberation Sans" font-size="30" fill="#111" textLength="294.4" lengthAdjust="spacingAndGlyphs">developerpublish.com</text>
<g>
<rect x="1258.5" y="560.5" width="27.5" height="24" fill="#fff" stroke="#b4b4b4"/>
<rect x="1258" y="560" width="28.5" height="4.7" fill="#b4b4b4"/>
<path d="M1267.5 565v19.5M1276.5 565v19.5M1259 569.5h27M1259 574.5h27M1259 579.5h27" stroke="#d0d0d0"/>
<rect x="1305" y="568" width="7" height="17.8" fill="#a3bcd9"/>
<rect x="1313" y="559.8" width="7" height="26" fill="#f2deb5"/>
<rect x="1321" y="565" width="7" height="20.8" fill="#bababa"/>
<path d="M1347.5 561H1367L1372.7 567V578H1355L1347.5 578L1353 569.5Z" fill="#b8d3c6"/>
<rect x="1357.5" y="569.5" width="19" height="14" fill="#fff" stroke="#b4b4b4"/>
<path d="M1361 574h1.5M1364 574h9M1361 577h1.5M1364 577h9M1361 580h1.5M1364 580h9" stroke="#cfcfcf"/>
<path d="M1406.5 558.5L1418.5 565V579L1406.5 586L1394.5 579V565Z" fill="#fafafa" stroke="#8c8c8c" stroke-width="1"/>
<path d="M1418.5 565L1406.5 571.5V586M1394.5 565L1403 570" fill="none" stroke="#8c8c8c"/>
<circle cx="1415.5" cy="581.5" r="7" fill="#fff" stroke="#7aaad8" stroke-width="1.1"/>
<path d="M1408.5 581.5h14M1409.5 578h12M1409.5 585h12" stroke="#7aaad8" stroke-width="0.9"/>
<ellipse cx="1415.5" cy="581.5" rx="3" ry="7" fill="none" stroke="#7aaad8" stroke-width="0.9"/>
<rect x="1258.5" y="604.5" width="27" height="27" fill="#fff" stroke="#b4b4b4"/>
<circle cx="1279" cy="610.8" r="2.6" fill="#f2deb5"/>
<path d="M1260 630V624L1267.5 618L1271 621V630Z" fill="#dce6f0"/>
<rect x="1271.5" y="618.5" width="17" height="13" fill="#fff"/>
<rect x="1272.6" y="619.7" width="15" height="10.5" fill="#fff" stroke="#a3bcd9" stroke-width="1.3"/>
<path d="M1280 631v2M1276.5 633.5h7" stroke="#a3bcd9" stroke-width="1"/>
<rect x="1303.5" y="604.5" width="27" height="27" fill="#fff" stroke="#b4b4b4"/>
<circle cx="1324" cy="610.8" r="2.6" fill="#f2deb5"/>
<path d="M1305 630V624L1312.5 618L1318 623V630Z" fill="#dce6f0"/>
<circle cx="1325.4" cy="626.5" r="7.5" fill="#fff"/>
<circle cx="1325.4" cy="626.5" r="6.5" fill="#fff" stroke="#a3bcd9" stroke-width="1.1"/>
<path d="M1319 626.5h13M1320 623h11M1320 630h11" stroke="#a3bcd9" stroke-width="0.9"/>
<ellipse cx="1325.4" cy="626.5" rx="2.8" ry="6.5" fill="none" stroke="#a3bcd9" stroke-width="0.9"/>
<rect x="1350.5" y="606.5" width="23" height="22" fill="#fff" stroke="#b4b4b4" stroke-width="1.2"/>
<rect x="1350" y="606" width="24" height="3.8" fill="#b4b4b4"/>
<rect x="1350" y="625" width="24" height="3.8" fill="#b4b4b4"/>
<path d="M1352 607h2v1.8h-2zM1356 607h2v1.8h-2zM1360 607h2v1.8h-2zM1364 607h2v1.8h-2zM1368 607h2v1.8h-2zM1352 626h2v1.8h-2zM1356 626h2v1.8h-2zM1360 626h2v1.8h-2zM1364 626h2v1.8h-2zM1368 626h2v1.8h-2z" fill="#fff"/>
<circle cx="1411" cy="607.5" r="4.5" fill="#a3bcd9"/>
<path d="M1414 607l6 0.8c-1 2-2 2.5-4.5 2.5Z" fill="#a3bcd9"/>
<path d="M1393.5 610c2 2 5 2 8 1.5l4-0.5l6 1.5c1 2 0 4-1.5 6l-9 4.5c-4 0-7-1-7.5-4.5c-0.5-2-0.5-6 0-8.5Z" fill="#a3bcd9"/>
<path d="M1402 621c1-5 6-6 14-6.5c0 7-2 13-8 13.5c-3 0-6-1.5-6-7Z" fill="#fff" stroke="#b4b4b4" stroke-width="1.1"/>
<path d="M1400 632c2-4 6-7 10-9.5" fill="none" stroke="#b4b4b4" stroke-width="1.1"/>
</g>

</svg>
<!-- scrollbar -->
<div class="a" style="left:1900px;top:198px;width:19px;height:734px;background:#dadada"></div>
<div class="a" style="left:1900px;top:198px;width:19px;height:19px;background:#fff;border:1px solid #c6c6c6"></div>
<div class="a" style="left:1904.8px;top:204.8px;width:0;height:0;border-left:4.7px solid transparent;border-right:4.7px solid transparent;border-bottom:5px solid #6d6d6d"></div>
<div class="a" style="left:1900px;top:449px;width:19px;height:231px;background:#fff;border:1px solid #c6c6c6"></div>
<div class="a" style="left:1900px;top:913px;width:19px;height:19px;background:#fff;border:1px solid #c6c6c6"></div>
<div class="a" style="left:1904.8px;top:920px;width:0;height:0;border-left:4.7px solid transparent;border-right:4.7px solid transparent;border-top:5px solid #6d6d6d"></div>
<svg class="a" style="left:1900px;top:930px" width="20" height="45" viewBox="1900 930 20 45">
<path d="M1909.5 938L1914.3 943H1904.7ZM1909.5 942.6L1914.3 948H1904.7ZM1904.7 959.8H1914.3L1909.5 965ZM1904.7 965H1914.3L1909.5 970.2Z" fill="#6d6d6d"/>
</svg>
<!--WORK_END-->

<!--STATUS_START-->
<div class="a" style="left:0;top:1003px;width:1920px;height:1px;background:#c8c8c8"></div>
<div class="a" style="left:0;top:1004px;width:1920px;height:24px;background:#f3f3f3"></div>
<div class="t" style="left:10px;top:1010.5px;font-size:13.1px;color:#444">Slide 2 of 3</div>
<svg class="a" style="left:99px;top:1008px" width="20" height="17" viewBox="0 0 20 17">
<path d="M1.5 1.5h6.5l1.5 1.5l1.5-1.5h6.5v13h-6.5l-1.5 1.5l-1.5-1.5h-6.5z" fill="none" stroke="#777" stroke-width="1"/>
<path d="M9.5 3v12.5" stroke="#777"/>
<path d="M11.5 8l2 2l4-5" fill="none" stroke="#777" stroke-width="1.1"/>
</svg>
<div class="t" style="left:139px;top:1010.5px;font-size:12.7px;color:#444">English (United States)</div>
<svg class="a" style="left:1288px;top:1009px" width="16" height="16" viewBox="0 0 16 16">
<path d="M7.5 1L11 4.5H4Z" fill="#6d6d6d"/><path d="M1 7.5h13M1 10.5h13M1 13.5h13" stroke="#6d6d6d" stroke-width="1.1"/>
</svg>
<div class="t" style="left:1308.5px;top:1010.5px;font-size:13px;color:#444">Notes</div>
<svg class="a" style="left:1367px;top:1008px" width="20" height="17" viewBox="0 0 20 17">
<path d="M2.5 1H17A1.5 1.5 0 0 1 18.5 2.5V10A1.5 1.5 0 0 1 17 11.5H8.5L5 15.5V11.5H2.5A1.5 1.5 0 0 1 1 10V2.5A1.5 1.5 0 0 1 2.5 1Z" fill="#6d6d6d"/>
</svg>
<div class="t" style="left:1389.4px;top:1010.5px;font-size:12.6px;color:#444">Comments</div>
<div class="a" style="left:1475px;top:1004px;width:50px;height:24px;background:#c8c8c8"></div>
<svg class="a" style="left:1480px;top:1004px" width="440" height="24" viewBox="1480 1004 440 24">
<g fill="none" stroke="#6d6d6d" stroke-width="1">
<rect x="1491.5" y="1009.5" width="16" height="15"/><path d="M1495.5 1009.5v15M1495.5 1019.5h12"/><rect x="1498.5" y="1011.5" width="6" height="5"/>
<rect x="1541.5" y="1009.5" width="6" height="5.5"/><rect x="1550.5" y="1009.5" width="6" height="5.5"/><rect x="1541.5" y="1018.5" width="6" height="5.5"/><rect x="1550.5" y="1018.5" width="6" height="5.5"/>
<path d="M1591.5 1010.5h7.5l0.5 1l0.5-1h7.5v13h-7.5l-0.5 1l-0.5-1h-7.5z"/><path d="M1599.5 1011v13M1593 1013.5h5M1593 1016.5h5M1593 1019.5h5M1601 1013.5h5M1601 1016.5h5M1601 1019.5h5"/>
<path d="M1640.5 1009.5h17M1642.5 1010v8.5h13v-8.5M1649 1018.5v5M1645.5 1023.5h7M1646 1013.5h6"/>
<path d="M1682 1016.5h9M1698 1017.5h125M1760.5 1014v7M1828.5 1016.5h10M1833.5 1011.5v10" stroke="#555"/>
<rect x="1898.5" y="1010.5" width="12" height="12"/>
<path d="M1904.5 1012.5v8M1900.5 1016.5h8M1903 1014l1.5-1.5l1.5 1.5M1903 1019l1.5 1.5l1.5-1.5M1902 1015l-1.5 1.5l1.5 1.5M1907 1015l1.5 1.5l-1.5 1.5" stroke-width="0.8"/>
</g>
<rect x="1749" y="1010" width="6" height="14" fill="#6d6d6d"/>
</svg>
<div class="t" style="left:1855px;top:1010.5px;font-size:13px;color:#444">86%</div>
<!--STATUS_END-->
<!--MENU_START-->
<div class="a" style="left:154px;top:172px;width:179px;height:97px;background:#fff;border:1px solid #c6c6c6;box-shadow:1px 1px 2px rgba(0,0,0,0.12)"></div>
<div class="a" style="left:156px;top:174px;width:175px;height:30px;background:#e9e9e9"></div>
<div class="t" style="left:166.5px;top:182.5px;font-size:14.5px;font-weight:bold;color:#5f5f5f">Insert Picture From</div>
<div class="a" style="left:156px;top:207px;width:175px;height:30px;background:#c5c5c5"></div>
<svg class="a" style="left:160px;top:211px" width="24" height="52" viewBox="160 211 24 52">
<rect x="161.5" y="212.5" width="15" height="16" fill="#fff" stroke="#6d6d6d"/>
<circle cx="172.5" cy="216.2" r="1.4" fill="#e8b56c"/>
<path d="M163 227.5v-5l3-2.5l3 2.5v5z" fill="#c0d3e6"/>
<rect x="170" y="222" width="10" height="8" fill="#c5c5c5"/>
<rect x="170.8" y="222.8" width="8.5" height="6.3" fill="#fff" stroke="#3f7bbf" stroke-width="1.2"/>
<path d="M175 229.5v2M172 231.5h6" stroke="#3f7bbf" stroke-width="1.1"/>
<rect x="161.5" y="242.5" width="15" height="16" fill="#fff" stroke="#6d6d6d"/>
<circle cx="172.5" cy="246.2" r="1.4" fill="#e8b56c"/>
<path d="M163 257.5v-5l3-2.5l3 2.5v5z" fill="#c0d3e6"/>
<circle cx="175" cy="256" r="5" fill="#fff"/>
<circle cx="175" cy="256" r="4.3" fill="#fff" stroke="#3f7bbf" stroke-width="1.1"/>
<path d="M171 254.3h8M171 257.7h8M173.3 252v8M176.7 252v8" stroke="#3f7bbf" stroke-width="0.9"/>
</svg>
<div class="t" style="left:195.4px;top:216px;font-size:13.7px;color:#262626">This <u>D</u>evice...</div>
<div class="t" style="left:195.4px;top:245.7px;font-size:13.9px;color:#262626"><u>O</u>nline Pictures...</div>
<!--MENU_END-->

</body></html>
